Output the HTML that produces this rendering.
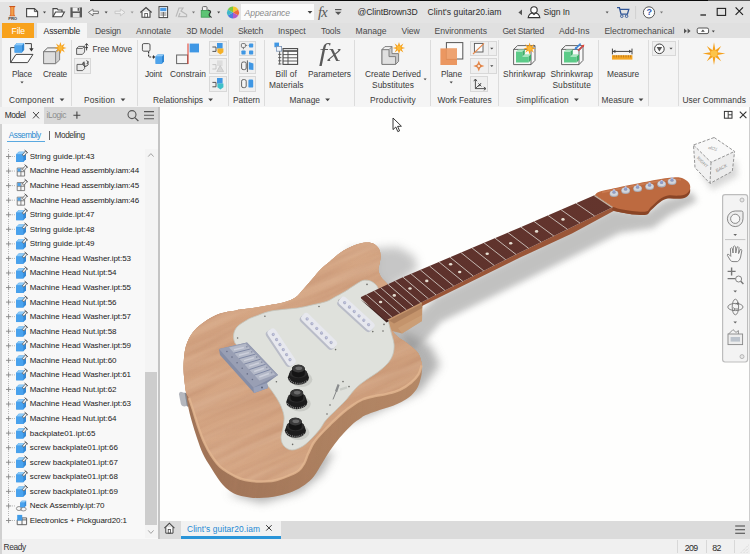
<!DOCTYPE html>
<html><head><meta charset="utf-8"><title>Autodesk Inventor - Clint's guitar20.iam</title>
<style>
html,body{margin:0;padding:0;}
body{width:750px;height:554px;overflow:hidden;position:relative;background:#fff;font-family:"Liberation Sans",sans-serif;}
.a{position:absolute;}
.t{position:absolute;white-space:nowrap;line-height:10px;}
svg{position:absolute;overflow:visible;}
#titlebar{left:0;top:0;width:750px;height:23px;background:#e3e3e3;}
#tabrow{left:0;top:23px;width:750px;height:15px;background:#e0e0e0;}
#ribbon{left:0;top:38px;width:750px;height:68.5px;background:#f5f5f5;}
.sep{position:absolute;top:40px;height:65.5px;width:1px;background:#dcdcdc;}
.btn{position:absolute;background:#efefef;border:1px solid #d8d8d8;box-sizing:border-box;}
#panel{left:0;top:106.5px;width:160px;height:432.5px;background:#f8f8f8;}
#viewport{left:160px;top:106.5px;width:590px;height:414.5px;background:#fefefd;}
#doctabs{left:160px;top:521px;width:590px;height:18px;background:#dbdbdb;}
#status{left:0;top:539px;width:750px;height:15px;background:#f0f0f0;}
</style></head><body>
<div id="titlebar" class="a"></div>
<div class="a" style="left:0;top:0;width:90px;height:1.6px;background:#f0f0f0"></div>
<div class="a" style="left:89.6px;top:0;width:618px;height:1.3px;background:#0a0a0a"></div>
<div class="a" style="left:708px;top:0;width:42px;height:1px;background:#555"></div>
<div id="tabrow" class="a"></div>
<div class="a" style="left:2px;top:23px;width:32px;height:15px;background:#f8a21c"></div>
<div class="a" style="left:37px;top:23px;width:50px;height:15px;background:#f5f5f5"></div>
<div id="ribbon" class="a"></div>
<div class="a" style="left:0;top:38px;width:2px;height:68.5px;background:#e6e6e6"></div>
<div class="a" style="left:241px;top:4px;width:73px;height:16px;background:#fbfbfb"></div>
<svg style="left:0;top:0" width="750" height="40" viewBox="0 0 750 40">
<!-- Inventor logo -->
<path d="M9.2 6 H15.4 L14.4 7.8 V14.4 L15.4 16.2 H9.2 L10.2 14.4 V7.8 Z" fill="#e0702c"/>
<path d="M11.2 7 H13.4 V15.4 H11.2 Z" fill="#f2a04a"/>
<path d="M9.2 6 H15.4 L14.8 7 H9.8 Z" fill="#c9541c"/>
<text x="8.2" y="20.2" font-size="4.2" font-weight="bold" fill="#3a3a3a" font-family="Liberation Sans, sans-serif" letter-spacing="-0.1">PRO</text>
<!-- new -->
<path d="M26.6 8.6 H34.4 L37.6 11.6 V16.8 H26.6 Z" fill="#fdfdfd" stroke="#444" stroke-width="1.1"/>
<path d="M34.4 8.6 V11.6 H37.6" fill="none" stroke="#444" stroke-width="0.9"/>
<path d="M43 11.6 H46 L44.5 13.4 Z" fill="#444"/>
<!-- open -->
<path d="M53 16.8 V8.6 H57 L58.2 10 H62 V12" fill="#fdfdfd" stroke="#444" stroke-width="1.1"/>
<path d="M53 16.8 L55.6 12 H64.4 L61.8 16.8 Z" fill="#fdfdfd" stroke="#444" stroke-width="1.1"/>
<!-- save -->
<path d="M70.4 7.4 H82 V17.4 H70.4 Z" fill="#5a5a5a"/>
<rect x="72.6" y="7.4" width="7" height="4" fill="#f2f2f2"/>
<rect x="77.6" y="8" width="1.4" height="2.8" fill="#5a5a5a"/>
<rect x="72.8" y="13" width="6.8" height="4.4" fill="#e4e4e4"/>
<!-- undo -->
<path d="M88.4 12.4 L93 9 V11.2 H98.4 V13.6 H93 V15.8 Z" fill="#f4f4f4" stroke="#666" stroke-width="0.9"/>
<path d="M104.6 11.6 H107.6 L106.1 13.4 Z" fill="#444"/>
<!-- redo -->
<path d="M125 12.4 L120.4 9 V11.2 H115 V13.6 H120.4 V15.8 Z" fill="#efefef" stroke="#c4c4c4" stroke-width="0.9"/>
<path d="M130.6 11.6 H133.6 L132.1 13.4 Z" fill="#999"/>
<!-- home -->
<path d="M140.4 12.6 L146 7.6 L151.6 12.6" fill="none" stroke="#444" stroke-width="1.3"/>
<path d="M142 12 V17.2 H150 V12" fill="#fdfdfd" stroke="#444" stroke-width="1.1"/>
<rect x="144.8" y="13.4" width="2.6" height="3.8" fill="#fdfdfd" stroke="#444" stroke-width="0.8"/>
<!-- doc blue -->
<rect x="159" y="6.6" width="8.6" height="11" fill="#fdfdfd" stroke="#444" stroke-width="1"/>
<rect x="160.2" y="7.8" width="6.2" height="3.4" fill="#4a9be6"/>
<path d="M160.4 13 H166.4 M160.4 15 H166.4 M163.4 12 V17" stroke="#555" stroke-width="0.8"/>
<!-- grey icon -->
<path d="M176 16.6 L179 8 H183 L181 11 L186.6 14.6 V16.6 H178.6 L180 13" fill="none" stroke="#b9b9b9" stroke-width="1.2"/>
<path d="M192 11.6 H195 L193.5 13.4 Z" fill="#777"/>
<!-- green icon -->
<rect x="202.4" y="6.6" width="4.6" height="5" rx="1" fill="#f2f2f2" stroke="#666" stroke-width="1"/>
<rect x="201.2" y="10.4" width="8.6" height="6.8" fill="#5cc474" stroke="#3a9a52" stroke-width="0.8"/>
<path d="M208 10 Q212.4 11 209.6 13.6 Q208 15.6 211.6 17.4" fill="none" stroke="#333" stroke-width="1.1"/>
<path d="M217.2 11.6 H220.2 L218.7 13.4 Z" fill="#444"/>
<!-- colour wheel -->
<g transform="translate(233 12.4)">
<path d="M0 0 L0 -6 A6 6 0 0 1 5.2 -3 Z" fill="#f6c52c"/>
<path d="M0 0 L5.2 -3 A6 6 0 0 1 5.2 3 Z" fill="#ee6a3a"/>
<path d="M0 0 L5.2 3 A6 6 0 0 1 0 6 Z" fill="#b05ac8"/>
<path d="M0 0 L0 6 A6 6 0 0 1 -5.2 3 Z" fill="#4a7de0"/>
<path d="M0 0 L-5.2 3 A6 6 0 0 1 -5.2 -3 Z" fill="#3fb8c8"/>
<path d="M0 0 L-5.2 -3 A6 6 0 0 1 0 -6 Z" fill="#7ac943"/>
</g>
<!-- appearance dropdown -->
<path d="M307.6 11 H312.4 L310 13.8 Z" fill="#444"/>
<!-- customize -->
<path d="M335 9.6 H341.4" stroke="#555" stroke-width="1.2"/>
<path d="M335 11.8 H341.4 L338.2 15 Z" fill="#555"/>
<!-- left arrow -->
<path d="M522 9.6 V15.2 L518.4 12.4 Z" fill="#555"/>
<!-- user -->
<circle cx="534" cy="10" r="3.2" fill="#fdfdfd" stroke="#333" stroke-width="1.1"/>
<path d="M528.2 17.6 Q529 13.4 532.4 13 L534 14.4 L535.6 13 Q539 13.4 539.8 17.6 Z" fill="#fdfdfd" stroke="#333" stroke-width="1.1"/>
<path d="M605.6 11.6 H608.6 L607.1 13.4 Z" fill="#555"/>
<!-- cart -->
<path d="M617 7.6 H619.4 L621 14.2 H627.4 L628.8 9.4 H620" fill="none" stroke="#2f5597" stroke-width="1.3"/>
<circle cx="621.8" cy="16.2" r="1.3" fill="none" stroke="#2f5597" stroke-width="0.9"/>
<circle cx="626.6" cy="16.2" r="1.3" fill="none" stroke="#2f5597" stroke-width="0.9"/>
<path d="M635.6 6 V19" stroke="#d0d0d0" stroke-width="1"/>
<!-- help -->
<circle cx="649" cy="12.4" r="5.6" fill="#fdfdfd" stroke="#555" stroke-width="1"/>
<path d="M660 11.6 H663 L661.5 13.4 Z" fill="#777"/>
<!-- window buttons -->
<path d="M700.4 15 H706" stroke="#222" stroke-width="1.3"/>
<rect x="717.2" y="8.4" width="8.4" height="7" fill="none" stroke="#222" stroke-width="1.1"/>
<path d="M735.6 7.4 L743 14.8 M743 7.4 L735.6 14.8" stroke="#222" stroke-width="1.2"/>
<!-- tab row right icons -->
<path d="M684 28.6 L687 31 L684 33.4 Z M687.6 28.6 L690.6 31 L687.6 33.4 Z" fill="#555"/>
<rect x="697.2" y="28" width="11.4" height="5.6" rx="1.6" fill="#fdfdfd" stroke="#444" stroke-width="0.9"/>
<path d="M701 31.8 L702.9 29.6 L704.8 31.8 Z" fill="#444"/>
<path d="M711.8 30.6 H714.8 L713.3 32.6 Z" fill="#444"/>
</svg>
<span class="t" style="left:646.4px;top:7.4px;font-size:9px;font-weight:bold;color:#2f55b0;">?</span>
<span class="t" style="left:318px;top:4.6px;font-size:14.5px;font-family:'Liberation Serif',serif;font-style:italic;color:#555;letter-spacing:-0.8px;line-height:14px">fx</span>

<div class="sep" style="left:71px"></div><div class="sep" style="left:137px"></div><div class="sep" style="left:228px"></div><div class="sep" style="left:264px"></div><div class="sep" style="left:354px"></div><div class="sep" style="left:430px"></div><div class="sep" style="left:498px"></div><div class="sep" style="left:598px"></div><div class="sep" style="left:648px"></div><div class="sep" style="left:678px"></div>
<div class="btn" style="left:74.4px;top:58.4px;width:16.6px;height:15.4px"></div>
<div class="btn" style="left:209.4px;top:41px;width:17.2px;height:15.2px"></div>
<div class="btn" style="left:209.4px;top:58.4px;width:17.2px;height:15.4px"></div>
<div class="btn" style="left:209.4px;top:76px;width:17.2px;height:15.6px"></div>
<div class="btn" style="left:238.6px;top:41px;width:17.4px;height:15.2px"></div>
<div class="btn" style="left:238.6px;top:58.4px;width:17.4px;height:15.4px"></div>
<div class="btn" style="left:238.6px;top:76px;width:17.4px;height:15.6px"></div>
<div class="btn" style="left:470.4px;top:41px;width:26.2px;height:15.2px"></div><div class="a" style="left:487.6px;top:41px;width:1px;height:15.2px;background:#d8d8d8"></div>
<div class="btn" style="left:470.4px;top:58.4px;width:26.2px;height:15.4px"></div><div class="a" style="left:487.6px;top:58.4px;width:1px;height:15.4px;background:#d8d8d8"></div>
<div class="btn" style="left:470.4px;top:76px;width:17.6px;height:15.6px"></div>
<div class="btn" style="left:651.6px;top:41px;width:24.4px;height:15.2px"></div>
<svg style="left:0;top:0" width="750" height="110" viewBox="0 0 750 110">
<g id="arrows" fill="#444">
<path d="M20.4 81.6 H23.6 L22 83.4 Z"/>
<path d="M59.6 98.4 H64.4 L62 101.2 Z"/>
<path d="M120.6 98.4 H125.4 L123 101.2 Z"/>
<path d="M208.2 98.4 H213 L210.6 101.2 Z"/>
<path d="M325.2 98.4 H330 L327.6 101.2 Z"/>
<path d="M423.6 78.4 H426.6 L425.1 80.2 Z"/>
<path d="M449.6 81.6 H452.8 L451.2 83.4 Z"/>
<path d="M574 98.4 H578.8 L576.4 101.2 Z"/>
<path d="M638.6 98.4 H643.4 L641 101.2 Z"/>
<path d="M490.2 47.8 H493.4 L491.8 49.6 Z"/>
<path d="M490.2 65.2 H493.4 L491.8 67 Z"/>
<path d="M669.4 47.8 H672.6 L671 49.6 Z"/>
</g>
<!-- Place -->
<path d="M10.6 62.6 L16 54.4 H33 L27.6 62.6 Z" fill="#fbfbfb" stroke="#444" stroke-width="1"/>
<path d="M10.6 62.6 V47.6 H15" fill="none" stroke="#444" stroke-width="1"/>
<path d="M25 43.6 H31.4 V49" fill="none" stroke="#444" stroke-width="1"/>
<path d="M29.2 48.2 H33.6 L31.4 51.6 Z" fill="#333"/>
<path d="M14.6 45.6 L16.8 43 H24.2 V50 L22 52.6 H14.6 Z" fill="#2f86d2"/>
<path d="M14.6 45.6 H22 V52.6 H14.6 Z" fill="#4ea4ec"/>
<path d="M14.6 45.6 L16.8 43 H24.2 L22 45.6 Z" fill="#8ccafa"/>
<!-- Create -->
<path d="M43.6 51.6 L47.6 48 H59.6 V60 L55.6 63.6 H43.6 Z" fill="#cfcfcf" stroke="#7a7a7a" stroke-width="0.9"/>
<path d="M43.6 51.6 H55.6 V63.6 H43.6 Z" fill="#dedede" stroke="#7a7a7a" stroke-width="0.9"/>
<path d="M43.6 51.6 L47.6 48 H59.6 L55.6 51.6 Z" fill="#f0f0f0" stroke="#7a7a7a" stroke-width="0.9"/>
<g transform="translate(60.4 48)"><path d="M0 -6 L1.2 -2.2 L4.4 -4.4 L2.6 -1 L6.2 0 L2.6 1 L4.4 4.4 L1.2 2.2 L0 6 L-1.2 2.2 L-4.4 4.4 L-2.6 1 L-6.2 0 L-2.6 -1 L-4.4 -4.4 L-1.2 -2.2 Z" fill="#f7a21b"/><circle r="2.2" fill="#fbb93a"/></g>
<!-- free move -->
<path d="M76.6 48.4 H82.4 L84.6 46.4 V52 L82.4 54.4 H76.6 Z" fill="#e9e9e9" stroke="#555" stroke-width="0.9"/>
<path d="M76.6 48.4 L78.8 46.4 H84.6" fill="none" stroke="#555" stroke-width="0.9"/>
<path d="M86.6 43.8 V50.4 M85 45.4 L86.6 43.6 L88.2 45.4 M85.2 47.6 H88" stroke="#333" stroke-width="0.9" fill="none"/>
<!-- rotate -->
<path d="M77 64.4 H82.6 L84.6 62.6 V68.6 L82.6 70.6 H77 Z" fill="#e9e9e9" stroke="#555" stroke-width="0.9"/>
<path d="M84 61.6 A2.6 2.6 0 1 0 87.8 62.6" fill="none" stroke="#333" stroke-width="1"/>
<path d="M86.4 60.6 L88.6 62 L86.6 63.6" fill="none" stroke="#333" stroke-width="0.9"/>
<!-- joint -->
<rect x="142.4" y="43.6" width="7.6" height="7.6" rx="1.4" fill="#f1f1f1" stroke="#555" stroke-width="1"/>
<path d="M148.6 51.6 V57 H154" fill="none" stroke="#333" stroke-width="1.2" stroke-dasharray="2 1"/>
<path d="M153 55 L155.4 57 L153 59 Z" fill="#333"/>
<path d="M155.6 56.6 L157.6 54.6 H164 V61.6 L162 63.8 H155.6 Z" fill="#2f86d2"/>
<path d="M155.6 56.6 H162 V63.8 H155.6 Z" fill="#4ea4ec"/>
<path d="M155.6 56.6 L157.6 54.6 H164 L162 56.6 Z" fill="#8ccafa"/>
<!-- constrain -->
<rect x="176.6" y="55" width="11" height="8.6" fill="#f6f6f6" stroke="#666" stroke-width="1"/>
<path d="M188 43.6 V64" stroke="#e0483a" stroke-width="1.1"/>
<rect x="189.6" y="43.6" width="9.4" height="8.8" fill="#3f97e4"/>
<!-- small relationship icons -->
<g id="rel1" transform="translate(0 0)">
<path d="M212.4 47 H216 V51.4 H212.4" fill="none" stroke="#444" stroke-width="0.9"/>
<rect x="217" y="43" width="5.6" height="5.6" fill="#3f97e4"/>
<path d="M217.4 48.4 H223.4 V52.2 L220.4 54.4 L217.4 52.2 Z" fill="#f5b026"/>
</g>
<g opacity="0.45">
<path d="M212.4 64.6 H216 V69 H212.4" fill="none" stroke="#888" stroke-width="0.9"/>
<rect x="217" y="60.4" width="5.6" height="5.6" fill="#c8c8c8"/>
<path d="M220.2 65.6 L223.6 71.6 H216.8 Z" fill="#bdbdbd" stroke="#888" stroke-width="0.7"/>
</g>
<path d="M212.4 82.4 H216 V86.8 H212.4" fill="none" stroke="#444" stroke-width="0.9"/>
<rect x="217" y="78" width="5.6" height="5.6" fill="#3f97e4"/>
<path d="M217.4 83.4 H223.4 V87.2 L220.4 89.6 L217.4 87.2 Z" fill="#3fc0c8"/>
<!-- pattern icons -->
<rect x="241.4" y="43.6" width="4" height="3.8" rx="0.8" fill="#f4f4f4" stroke="#555" stroke-width="0.8"/>
<rect x="249" y="43.4" width="4.2" height="4.2" rx="0.8" fill="#3f97e4"/>
<rect x="241.4" y="50.4" width="4.2" height="4.2" rx="0.8" fill="#3f97e4"/>
<rect x="249" y="50.4" width="4.2" height="4.2" rx="0.8" fill="#3f97e4"/>
<path d="M246 45.4 H248.4 M243.4 48 V50" stroke="#555" stroke-width="0.8" stroke-dasharray="1 0.8"/>
<rect x="241.6" y="62" width="4.6" height="7.6" rx="1.6" fill="#f4f4f4" stroke="#555" stroke-width="0.9"/>
<path d="M247.4 60.4 V72" stroke="#555" stroke-width="0.9"/>
<path d="M248.8 62 L253.4 63.4 V70 L248.8 69.4 Z" fill="#3f97e4"/>
<rect x="241.6" y="79.6" width="4.6" height="8" rx="1.6" fill="#f4f4f4" stroke="#555" stroke-width="0.9"/>
<rect x="248.4" y="79.6" width="4.8" height="8" rx="1.2" fill="#3f97e4"/>
<!-- BOM -->
<rect x="274.4" y="42.6" width="4.6" height="4.6" fill="#3f97e4"/>
<rect x="276.4" y="46.4" width="5.2" height="4.8" fill="#f2f6fb" stroke="#7b93b5" stroke-width="0.8"/>
<path d="M279.6 51.4 V64.4 M278.2 54.4 H281.4 M278.2 57.6 H281.4 M278.2 60.8 H281.4 M278.2 64 H281.4" stroke="#555" stroke-width="0.9"/>
<rect x="283" y="48.6" width="14.6" height="15.8" fill="#fbfbfb" stroke="#4a4a4a" stroke-width="1.1"/>
<path d="M283 51 H297.6" stroke="#4a4a4a" stroke-width="1.6"/>
<path d="M283 54.6 H297.6 M283 57.8 H297.6 M283 61 H297.6 M288 51 V64.4" stroke="#4a4a4a" stroke-width="0.9"/>
<!-- Create derived -->
<path d="M382 49.6 L385 46.6 H392 V53.6 H398.6 V61.4 L395.6 64.4 H382 Z" fill="#c9c9c9" stroke="#777" stroke-width="0.9"/>
<path d="M382 49.6 H389 V56.6 H395.6 V64.4 H382 Z" fill="#e0e0e0" stroke="#777" stroke-width="0.9"/>
<path d="M382 49.6 L385 46.6 H392 L389 49.6 Z" fill="#f2f2f2" stroke="#777" stroke-width="0.8"/>
<g transform="translate(399 48)"><path d="M0 -6 L1.2 -2.2 L4.4 -4.4 L2.6 -1 L6.2 0 L2.6 1 L4.4 4.4 L1.2 2.2 L0 6 L-1.2 2.2 L-4.4 4.4 L-2.6 1 L-6.2 0 L-2.6 -1 L-4.4 -4.4 L-1.2 -2.2 Z" fill="#f7a21b"/><circle r="2.2" fill="#fbb93a"/></g>
<!-- Plane -->
<rect x="446.4" y="42.6" width="16.4" height="16.4" fill="#fbfbfb" stroke="#555" stroke-width="1"/>
<rect x="440.4" y="48.4" width="16.6" height="16.6" fill="#e98a4c" opacity="0.88"/>
<rect x="446.4" y="48.4" width="10.6" height="10.6" fill="#f0a878" opacity="0.7"/>
<!-- work small icons -->
<rect x="474.4" y="43.4" width="8.6" height="8.6" fill="#fbfbfb" stroke="#555" stroke-width="0.9"/>
<path d="M473 54 L484 43.4" stroke="#e98a4c" stroke-width="1.1"/>
<g transform="translate(478.8 66)"><path d="M0 -5.6 L1.6 -1.6 L5.6 0 L1.6 1.6 L0 5.6 L-1.6 1.6 L-5.6 0 L-1.6 -1.6 Z" fill="#e98a4c"/><circle r="1.8" fill="#fbe6d6" stroke="#c96a2c" stroke-width="0.7"/></g>
<path d="M475.4 79.4 V88.6 H485.6 M473.8 81.2 L475.4 79 L477 81.2 M483.8 87 L486 88.6 L483.8 90.2 M475.4 88.6 L480.4 83.6 M478.4 83.4 L481.4 86.4 M481 83.2 L478.6 86.6" fill="none" stroke="#444" stroke-width="0.9"/>
<!-- Shrinkwrap 1 -->
<g id="sw1">
<path d="M513.6 49.4 L517.6 45.6 H535 V60.4 L531 64.6 H513.6 Z" fill="#f8f8f8" stroke="#555" stroke-width="0.9"/>
<path d="M513.6 49.4 H531 V64.6 M531 49.4 L535 45.6" fill="none" stroke="#555" stroke-width="0.9"/>
<path d="M516 51.6 H522.4 V56.4 H528.6 V62.4 H516 Z" fill="#5ccb88"/>
<path d="M516 51.6 L518.4 49.4 H524.8 L522.4 51.6 Z M522.4 56.4 L524.8 54.2 H531 L528.6 56.4 Z" fill="#a6e6bd"/>
<path d="M528.6 56.4 L531 54.2 V60 L528.6 62.4 Z M522.4 51.6 L524.8 49.4 V54.2 L522.4 56.4 Z" fill="#3fae6a"/>
</g>
<g transform="translate(529.6 48.4)"><path d="M0 -6 L1.2 -2.2 L4.4 -4.4 L2.6 -1 L6.2 0 L2.6 1 L4.4 4.4 L1.2 2.2 L0 6 L-1.2 2.2 L-4.4 4.4 L-2.6 1 L-6.2 0 L-2.6 -1 L-4.4 -4.4 L-1.2 -2.2 Z" fill="#f7a21b"/><circle r="2.2" fill="#fbb93a"/></g>
<!-- Shrinkwrap 2 -->
<g transform="translate(48 0)">
<path d="M513.6 49.4 L517.6 45.6 H535 V60.4 L531 64.6 H513.6 Z" fill="#f8f8f8" stroke="#555" stroke-width="0.9"/>
<path d="M513.6 49.4 H531 V64.6 M531 49.4 L535 45.6" fill="none" stroke="#555" stroke-width="0.9"/>
<path d="M516 51.6 H522.4 V56.4 H528.6 V62.4 H516 Z" fill="#5ccb88"/>
<path d="M516 51.6 L518.4 49.4 H524.8 L522.4 51.6 Z M522.4 56.4 L524.8 54.2 H531 L528.6 56.4 Z" fill="#a6e6bd"/>
<path d="M528.6 56.4 L531 54.2 V60 L528.6 62.4 Z M522.4 51.6 L524.8 49.4 V54.2 L522.4 56.4 Z" fill="#3fae6a"/>
<path d="M527.6 48.6 L532.6 43.6 M530.2 50.8 L535.2 45.8" stroke-width="1.6" fill="none" stroke="#3f86d8"/>
<path d="M530.2 50.8 L535.2 45.8" stroke-width="1.6" fill="none" stroke="#e0483a"/>
<path d="M526.4 49.8 L527.2 46.8 L529.4 49 Z" fill="#3f86d8"/><path d="M536.4 44.6 L535.6 47.6 L533.4 45.4 Z" fill="#e0483a"/>
</g>
<!-- Measure -->
<path d="M612.4 48.6 V54.4 M632 48.6 V54.4 M612.4 51.4 H632" stroke="#444" stroke-width="1"/>
<path d="M612.6 51.4 L615.4 49.8 V53 Z M631.8 51.4 L629 49.8 V53 Z" fill="#444"/>
<rect x="612" y="55.2" width="20.4" height="4.4" fill="#f5a623"/>
<path d="M614 55.2 V57.4 M616.4 55.2 V57.4 M618.8 55.2 V57.4 M621.2 55.2 V57.4 M623.6 55.2 V57.4 M626 55.2 V57.4 M628.4 55.2 V57.4 M630.6 55.2 V57.4" stroke="#9a5a10" stroke-width="0.6"/>
<!-- circle-triangle -->
<circle cx="659.4" cy="48.8" r="4.8" fill="#fbfbfb" stroke="#444" stroke-width="1"/>
<path d="M656.6 47 H662.2 L659.4 51.6 Z" fill="#555"/>
<!-- user star -->
<g transform="translate(714 53.6)">
<path d="M0 -11.4 L1.4 -3.4 L7.2 -7.6 L3.4 -1.4 L11.4 0 L3.4 1.4 L7.2 7.6 L1.4 3.4 L0 11.4 L-1.4 3.4 L-7.2 7.6 L-3.4 1.4 L-11.4 0 L-3.4 -1.4 L-7.2 -7.6 L-1.4 -3.4 Z" fill="#f5a01a"/>
<circle r="3.4" fill="#fcc44a"/>
</g>
</svg>
<span class="t" style="left:319px;top:37.8px;font-size:25px;font-family:'Liberation Serif',serif;font-style:italic;color:#5a5a5a;letter-spacing:0.5px;line-height:30px;transform:scaleX(1.18);transform-origin:0 0">fx</span>

<div id="viewport" class="a"></div>
<svg style="left:0;top:0" width="750" height="554" viewBox="0 0 750 554">
<defs>
<filter id="sh1" x="-20%" y="-20%" width="140%" height="140%"><feGaussianBlur stdDeviation="5"/></filter>
<filter id="sh2" x="-20%" y="-40%" width="140%" height="180%"><feGaussianBlur stdDeviation="3.2"/></filter>
<filter id="soft" x="-5%" y="-5%" width="110%" height="110%"><feGaussianBlur stdDeviation="0.5"/></filter>
<filter id="grain" x="0" y="0" width="100%" height="100%"><feGaussianBlur stdDeviation="2.5"/></filter>
<linearGradient id="woodtop" gradientUnits="userSpaceOnUse" x1="190" y1="330" x2="400" y2="440">
<stop offset="0" stop-color="#d4a583"/><stop offset="0.45" stop-color="#d5a684"/><stop offset="1" stop-color="#ce9f7c"/></linearGradient>
<linearGradient id="woodside" gradientUnits="userSpaceOnUse" x1="200" y1="480" x2="420" y2="380">
<stop offset="0" stop-color="#9e7256"/><stop offset="0.5" stop-color="#ac8060"/><stop offset="1" stop-color="#b48866"/></linearGradient>
<linearGradient id="fb" gradientUnits="userSpaceOnUse" x1="360" y1="310" x2="610" y2="200">
<stop offset="0" stop-color="#5b312c"/><stop offset="1" stop-color="#64352d"/></linearGradient>
<filter id="wood" x="0" y="0" width="100%" height="100%" color-interpolation-filters="sRGB">
<feTurbulence type="fractalNoise" baseFrequency="0.009 0.13" numOctaves="3" seed="7" result="n"/>
<feColorMatrix type="matrix" values="0 0 0 0 0.73  0 0 0 0 0.52  0 0 0 0 0.40  1.6 0 0 0 -0.62"/>
</filter>
<filter id="wood2" x="0" y="0" width="100%" height="100%" color-interpolation-filters="sRGB">
<feTurbulence type="fractalNoise" baseFrequency="0.008 0.1" numOctaves="2" seed="21" result="n"/>
<feColorMatrix type="matrix" values="0 0 0 0 0.89  0 0 0 0 0.75  0 0 0 0 0.64  1.8 0 0 0 -0.7"/>
</filter>
<clipPath id="outclip"><path d="M186.0 392.0 C185.4 387.7 184.8 383.7 184.4 380.0 C184.0 376.3 183.7 373.7 183.6 370.0 C183.5 366.3 183.6 362.0 184.0 358.0 C184.4 354.0 184.8 349.8 186.0 346.0 C187.2 342.2 188.8 338.3 191.0 335.0 C193.2 331.7 195.8 328.8 199.0 326.0 C202.2 323.2 206.2 320.4 210.0 318.2 C213.8 316.0 217.7 314.3 222.0 313.0 C226.3 311.7 233.0 311.0 236.0 310.4 C239.0 309.8 236.9 309.8 240.0 309.4 C243.1 308.9 249.7 308.4 254.5 307.7 C259.3 307.0 264.2 306.1 269.0 305.3 C273.8 304.5 279.1 303.9 283.4 302.6 C287.7 301.4 291.6 300.1 295.0 297.8 C298.4 295.5 300.7 292.1 303.6 289.0 C306.5 285.9 309.4 282.3 312.3 279.0 C315.2 275.7 318.1 271.9 321.0 269.0 C323.9 266.1 326.4 264.4 329.6 261.7 C332.8 259.0 335.9 255.7 340.0 253.0 C344.1 250.3 349.7 247.3 354.0 245.6 C358.3 243.9 362.7 242.9 366.0 242.6 C369.3 242.3 371.8 242.9 374.0 244.0 C376.2 245.1 377.9 247.0 379.0 249.0 C380.1 251.0 380.5 253.5 380.6 256.0 C380.7 258.5 379.8 261.7 379.4 264.0 C379.0 266.3 378.1 267.8 378.4 270.0 C378.7 272.2 379.7 274.9 381.0 277.0 C382.3 279.1 384.2 280.2 386.0 282.4 C387.8 284.6 391.0 285.4 392.0 290.0 C393.0 294.6 392.3 305.0 392.0 310.0 C391.7 315.0 390.0 316.7 390.0 320.0 C390.0 323.3 390.7 327.2 392.0 330.0 C393.3 332.8 395.3 334.7 398.0 337.0 C400.7 339.3 404.7 341.3 408.0 344.0 C411.3 346.7 415.7 349.8 418.0 353.0 C420.3 356.2 421.0 360.0 421.6 363.0 C422.2 366.0 421.9 368.6 421.8 371.0 C421.7 373.4 421.6 374.9 420.9 377.6 C420.2 380.3 419.3 384.3 417.7 387.3 C416.1 390.3 413.9 393.1 411.2 395.5 C408.5 397.9 404.9 400.1 401.4 402.0 C397.9 403.9 394.1 405.3 390.0 406.8 C385.9 408.3 381.1 409.5 377.0 410.9 C372.9 412.3 368.4 413.8 365.7 415.0 C363.0 416.2 363.3 416.3 360.9 418.0 C358.5 419.7 354.7 422.1 351.2 425.4 C347.7 428.7 343.3 433.4 339.8 437.6 C336.3 441.8 333.0 446.3 330.0 450.6 C327.0 454.9 324.7 459.3 322.0 463.6 C319.3 467.9 316.7 473.1 313.8 476.6 C310.9 480.1 308.4 482.2 304.9 484.7 C301.4 487.2 296.9 489.7 292.7 491.5 C288.5 493.3 283.8 494.6 279.7 495.6 C275.6 496.6 271.9 497.2 268.0 497.6 C264.1 498.0 260.0 498.2 256.0 498.0 C252.0 497.8 247.7 497.2 244.0 496.4 C240.3 495.6 237.0 494.8 234.0 493.4 C231.0 492.0 228.5 490.2 226.0 488.0 C223.5 485.8 221.7 483.7 219.0 480.0 C216.3 476.3 212.7 470.3 210.0 466.0 C207.3 461.7 205.2 458.7 203.0 454.0 C200.8 449.3 198.8 443.3 197.0 438.0 C195.2 432.7 193.5 427.3 192.0 422.0 C190.5 416.7 189.0 411.0 188.0 406.0 C187.0 401.0 186.6 396.3 186.0 392.0 Z"/></clipPath>
<clipPath id="topclip"><path d="M186.0 392.0 C185.2 389.0 184.8 383.7 184.4 380.0 C184.0 376.3 183.7 373.7 183.6 370.0 C183.5 366.3 183.6 362.0 184.0 358.0 C184.4 354.0 184.8 349.8 186.0 346.0 C187.2 342.2 188.8 338.3 191.0 335.0 C193.2 331.7 195.8 328.8 199.0 326.0 C202.2 323.2 206.2 320.4 210.0 318.2 C213.8 316.0 217.7 314.3 222.0 313.0 C226.3 311.7 233.0 311.0 236.0 310.4 C239.0 309.8 236.9 309.8 240.0 309.4 C243.1 308.9 249.7 308.4 254.5 307.7 C259.3 307.0 264.2 306.1 269.0 305.3 C273.8 304.5 279.1 303.9 283.4 302.6 C287.7 301.4 291.6 300.1 295.0 297.8 C298.4 295.5 300.7 292.1 303.6 289.0 C306.5 285.9 309.4 282.3 312.3 279.0 C315.2 275.7 318.1 271.9 321.0 269.0 C323.9 266.1 326.4 264.4 329.6 261.7 C332.8 259.0 335.9 255.7 340.0 253.0 C344.1 250.3 349.7 247.3 354.0 245.6 C358.3 243.9 362.7 242.9 366.0 242.6 C369.3 242.3 371.8 242.9 374.0 244.0 C376.2 245.1 377.9 247.0 379.0 249.0 C380.1 251.0 380.5 253.5 380.6 256.0 C380.7 258.5 379.8 261.7 379.4 264.0 C379.0 266.3 378.1 267.8 378.4 270.0 C378.7 272.2 379.7 274.9 381.0 277.0 C382.3 279.1 384.2 280.2 386.0 282.4 C387.8 284.6 391.0 285.4 392.0 290.0 C393.0 294.6 392.3 305.0 392.0 310.0 C391.7 315.0 390.0 316.7 390.0 320.0 C390.0 323.3 390.7 327.2 392.0 330.0 C393.3 332.8 395.3 334.7 398.0 337.0 C400.7 339.3 404.7 341.3 408.0 344.0 C411.3 346.7 415.7 349.8 418.0 353.0 C420.3 356.2 421.0 360.9 421.6 363.0 C422.2 365.1 422.2 363.5 421.7 365.4 C421.2 367.3 420.2 371.5 418.5 374.4 C416.8 377.2 414.3 379.9 411.2 382.5 C408.1 385.1 403.9 387.9 399.8 389.8 C395.7 391.7 391.1 392.7 386.8 393.8 C382.5 394.9 377.9 395.4 373.8 396.3 C369.8 397.2 366.0 398.0 362.5 399.5 C359.0 401.0 355.9 403.0 352.7 405.2 C349.4 407.4 346.5 409.5 343.0 412.5 C339.5 415.5 335.2 419.6 331.7 423.0 C328.2 426.4 325.0 429.4 322.0 432.7 C319.0 435.9 316.1 439.0 313.8 442.5 C311.5 446.0 309.7 450.4 308.1 453.8 C306.5 457.2 306.0 460.2 304.4 463.0 C302.8 465.8 301.4 468.4 298.6 470.6 C295.9 472.8 291.6 474.4 287.9 476.0 C284.2 477.6 280.1 479.1 276.5 480.0 C272.9 480.9 270.1 481.2 266.0 481.4 C261.9 481.6 256.3 481.5 252.0 481.0 C247.7 480.5 243.7 479.8 240.0 478.5 C236.3 477.2 233.3 475.5 230.0 473.5 C226.7 471.5 223.2 469.7 220.0 466.6 C216.8 463.5 213.7 459.1 211.0 455.0 C208.3 450.9 206.2 446.8 204.0 442.0 C201.8 437.2 199.8 431.3 198.0 426.0 C196.2 420.7 194.5 414.7 193.0 410.0 C191.5 405.3 190.2 401.0 189.0 398.0 C187.8 395.0 186.8 395.0 186.0 392.0 Z"/></clipPath>
</defs>
<g filter="url(#sh1)" opacity="0.75">
<path d="M300 470 L330 430 L370 415 L420 392 L440 365 L430 345 L400 330 L398 300 L380 250 L350 250 L330 300 L260 400 Z" fill="#9a9a9a"/>
<path d="M228 494 L262 503 L300 492 L322 474 L334 452 L316 452 L300 470 Z" fill="#9a9a9a"/>
<path d="M378 248 L398 247 L414 256 L418 268 L404 280 L388 288 L376 274 Z" fill="#b4b4b4"/>
</g>
<g filter="url(#sh2)" opacity="0.52">
<path d="M400 330 L436 297 L520 255 L613 209 L646 213 L664 200 L692 192 L697 201 L670 215 L653 228 L620 233 L524 281 L441 322 L426 340 L410 352 Z" fill="#8a8a8a"/>
</g>
<path d="M179 394.6 Q178.6 392.2 180.8 391.8 L186.4 393.6 L189.4 405 L184.6 406.6 Q181.4 406.4 180.8 403.6 Z" fill="#b4b7be"/>
<path d="M184.6 392.6 L187.6 393.4 L190.4 405.6 L187 406.8 Z" fill="#868a92"/>
<path d="M186.0 392.0 C185.4 387.7 184.8 383.7 184.4 380.0 C184.0 376.3 183.7 373.7 183.6 370.0 C183.5 366.3 183.6 362.0 184.0 358.0 C184.4 354.0 184.8 349.8 186.0 346.0 C187.2 342.2 188.8 338.3 191.0 335.0 C193.2 331.7 195.8 328.8 199.0 326.0 C202.2 323.2 206.2 320.4 210.0 318.2 C213.8 316.0 217.7 314.3 222.0 313.0 C226.3 311.7 233.0 311.0 236.0 310.4 C239.0 309.8 236.9 309.8 240.0 309.4 C243.1 308.9 249.7 308.4 254.5 307.7 C259.3 307.0 264.2 306.1 269.0 305.3 C273.8 304.5 279.1 303.9 283.4 302.6 C287.7 301.4 291.6 300.1 295.0 297.8 C298.4 295.5 300.7 292.1 303.6 289.0 C306.5 285.9 309.4 282.3 312.3 279.0 C315.2 275.7 318.1 271.9 321.0 269.0 C323.9 266.1 326.4 264.4 329.6 261.7 C332.8 259.0 335.9 255.7 340.0 253.0 C344.1 250.3 349.7 247.3 354.0 245.6 C358.3 243.9 362.7 242.9 366.0 242.6 C369.3 242.3 371.8 242.9 374.0 244.0 C376.2 245.1 377.9 247.0 379.0 249.0 C380.1 251.0 380.5 253.5 380.6 256.0 C380.7 258.5 379.8 261.7 379.4 264.0 C379.0 266.3 378.1 267.8 378.4 270.0 C378.7 272.2 379.7 274.9 381.0 277.0 C382.3 279.1 384.2 280.2 386.0 282.4 C387.8 284.6 391.0 285.4 392.0 290.0 C393.0 294.6 392.3 305.0 392.0 310.0 C391.7 315.0 390.0 316.7 390.0 320.0 C390.0 323.3 390.7 327.2 392.0 330.0 C393.3 332.8 395.3 334.7 398.0 337.0 C400.7 339.3 404.7 341.3 408.0 344.0 C411.3 346.7 415.7 349.8 418.0 353.0 C420.3 356.2 421.0 360.0 421.6 363.0 C422.2 366.0 421.9 368.6 421.8 371.0 C421.7 373.4 421.6 374.9 420.9 377.6 C420.2 380.3 419.3 384.3 417.7 387.3 C416.1 390.3 413.9 393.1 411.2 395.5 C408.5 397.9 404.9 400.1 401.4 402.0 C397.9 403.9 394.1 405.3 390.0 406.8 C385.9 408.3 381.1 409.5 377.0 410.9 C372.9 412.3 368.4 413.8 365.7 415.0 C363.0 416.2 363.3 416.3 360.9 418.0 C358.5 419.7 354.7 422.1 351.2 425.4 C347.7 428.7 343.3 433.4 339.8 437.6 C336.3 441.8 333.0 446.3 330.0 450.6 C327.0 454.9 324.7 459.3 322.0 463.6 C319.3 467.9 316.7 473.1 313.8 476.6 C310.9 480.1 308.4 482.2 304.9 484.7 C301.4 487.2 296.9 489.7 292.7 491.5 C288.5 493.3 283.8 494.6 279.7 495.6 C275.6 496.6 271.9 497.2 268.0 497.6 C264.1 498.0 260.0 498.2 256.0 498.0 C252.0 497.8 247.7 497.2 244.0 496.4 C240.3 495.6 237.0 494.8 234.0 493.4 C231.0 492.0 228.5 490.2 226.0 488.0 C223.5 485.8 221.7 483.7 219.0 480.0 C216.3 476.3 212.7 470.3 210.0 466.0 C207.3 461.7 205.2 458.7 203.0 454.0 C200.8 449.3 198.8 443.3 197.0 438.0 C195.2 432.7 193.5 427.3 192.0 422.0 C190.5 416.7 189.0 411.0 188.0 406.0 C187.0 401.0 186.6 396.3 186.0 392.0 Z" fill="url(#woodside)"/>
<path d="M186.0 392.0 C185.2 389.0 184.8 383.7 184.4 380.0 C184.0 376.3 183.7 373.7 183.6 370.0 C183.5 366.3 183.6 362.0 184.0 358.0 C184.4 354.0 184.8 349.8 186.0 346.0 C187.2 342.2 188.8 338.3 191.0 335.0 C193.2 331.7 195.8 328.8 199.0 326.0 C202.2 323.2 206.2 320.4 210.0 318.2 C213.8 316.0 217.7 314.3 222.0 313.0 C226.3 311.7 233.0 311.0 236.0 310.4 C239.0 309.8 236.9 309.8 240.0 309.4 C243.1 308.9 249.7 308.4 254.5 307.7 C259.3 307.0 264.2 306.1 269.0 305.3 C273.8 304.5 279.1 303.9 283.4 302.6 C287.7 301.4 291.6 300.1 295.0 297.8 C298.4 295.5 300.7 292.1 303.6 289.0 C306.5 285.9 309.4 282.3 312.3 279.0 C315.2 275.7 318.1 271.9 321.0 269.0 C323.9 266.1 326.4 264.4 329.6 261.7 C332.8 259.0 335.9 255.7 340.0 253.0 C344.1 250.3 349.7 247.3 354.0 245.6 C358.3 243.9 362.7 242.9 366.0 242.6 C369.3 242.3 371.8 242.9 374.0 244.0 C376.2 245.1 377.9 247.0 379.0 249.0 C380.1 251.0 380.5 253.5 380.6 256.0 C380.7 258.5 379.8 261.7 379.4 264.0 C379.0 266.3 378.1 267.8 378.4 270.0 C378.7 272.2 379.7 274.9 381.0 277.0 C382.3 279.1 384.2 280.2 386.0 282.4 C387.8 284.6 391.0 285.4 392.0 290.0 C393.0 294.6 392.3 305.0 392.0 310.0 C391.7 315.0 390.0 316.7 390.0 320.0 C390.0 323.3 390.7 327.2 392.0 330.0 C393.3 332.8 395.3 334.7 398.0 337.0 C400.7 339.3 404.7 341.3 408.0 344.0 C411.3 346.7 415.7 349.8 418.0 353.0 C420.3 356.2 421.0 360.9 421.6 363.0 C422.2 365.1 422.2 363.5 421.7 365.4 C421.2 367.3 420.2 371.5 418.5 374.4 C416.8 377.2 414.3 379.9 411.2 382.5 C408.1 385.1 403.9 387.9 399.8 389.8 C395.7 391.7 391.1 392.7 386.8 393.8 C382.5 394.9 377.9 395.4 373.8 396.3 C369.8 397.2 366.0 398.0 362.5 399.5 C359.0 401.0 355.9 403.0 352.7 405.2 C349.4 407.4 346.5 409.5 343.0 412.5 C339.5 415.5 335.2 419.6 331.7 423.0 C328.2 426.4 325.0 429.4 322.0 432.7 C319.0 435.9 316.1 439.0 313.8 442.5 C311.5 446.0 309.7 450.4 308.1 453.8 C306.5 457.2 306.0 460.2 304.4 463.0 C302.8 465.8 301.4 468.4 298.6 470.6 C295.9 472.8 291.6 474.4 287.9 476.0 C284.2 477.6 280.1 479.1 276.5 480.0 C272.9 480.9 270.1 481.2 266.0 481.4 C261.9 481.6 256.3 481.5 252.0 481.0 C247.7 480.5 243.7 479.8 240.0 478.5 C236.3 477.2 233.3 475.5 230.0 473.5 C226.7 471.5 223.2 469.7 220.0 466.6 C216.8 463.5 213.7 459.1 211.0 455.0 C208.3 450.9 206.2 446.8 204.0 442.0 C201.8 437.2 199.8 431.3 198.0 426.0 C196.2 420.7 194.5 414.7 193.0 410.0 C191.5 405.3 190.2 401.0 189.0 398.0 C187.8 395.0 186.8 395.0 186.0 392.0 Z" fill="url(#woodtop)"/>
<g clip-path="url(#topclip)" filter="url(#grain)" opacity="0.55">
<path d="M235.8 318.6 l49.8 -20.9" stroke="#e2b790" stroke-width="3.8" stroke-linecap="round"/>
<path d="M189.3 398.9 l44.5 -18.7" stroke="#e2b790" stroke-width="8.0" stroke-linecap="round"/>
<path d="M232.7 396.6 l43.8 -18.4" stroke="#e2b790" stroke-width="3.9" stroke-linecap="round"/>
<path d="M241.3 469.7 l31.3 -13.1" stroke="#dfb28a" stroke-width="6.2" stroke-linecap="round"/>
<path d="M357.1 334.8 l45.5 -19.1" stroke="#dfb28a" stroke-width="6.1" stroke-linecap="round"/>
<path d="M203.6 409.1 l63.6 -26.7" stroke="#cc9870" stroke-width="5.5" stroke-linecap="round"/>
<path d="M238.2 350.4 l77.2 -32.4" stroke="#dfb28a" stroke-width="7.1" stroke-linecap="round"/>
<path d="M186.6 352.5 l65.2 -27.4" stroke="#cc9870" stroke-width="4.6" stroke-linecap="round"/>
<path d="M274.0 407.8 l51.6 -21.7" stroke="#dfb28a" stroke-width="3.8" stroke-linecap="round"/>
<path d="M240.8 443.5 l34.1 -14.3" stroke="#dfb28a" stroke-width="5.3" stroke-linecap="round"/>
<path d="M296.6 416.6 l65.0 -27.3" stroke="#cc9870" stroke-width="3.7" stroke-linecap="round"/>
<path d="M199.3 464.4 l61.8 -25.9" stroke="#cc9870" stroke-width="5.2" stroke-linecap="round"/>
<path d="M261.5 434.4 l46.0 -19.3" stroke="#dfb28a" stroke-width="5.8" stroke-linecap="round"/>
<path d="M206.7 311.1 l41.4 -17.4" stroke="#cc9870" stroke-width="6.8" stroke-linecap="round"/>
<path d="M211.3 468.2 l44.5 -18.7" stroke="#dfb28a" stroke-width="3.1" stroke-linecap="round"/>
<path d="M334.9 461.3 l77.7 -32.6" stroke="#dfb28a" stroke-width="6.7" stroke-linecap="round"/>
<path d="M188.9 352.0 l78.3 -32.9" stroke="#c9966e" stroke-width="6.9" stroke-linecap="round"/>
<path d="M370.2 456.5 l64.0 -26.9" stroke="#cc9870" stroke-width="3.4" stroke-linecap="round"/>
<path d="M377.2 352.6 l42.5 -17.9" stroke="#cc9870" stroke-width="6.0" stroke-linecap="round"/>
<path d="M256.2 301.7 l32.2 -13.5" stroke="#dfb28a" stroke-width="3.8" stroke-linecap="round"/>
<path d="M399.4 402.9 l52.0 -21.8" stroke="#cc9870" stroke-width="4.0" stroke-linecap="round"/>
<path d="M209.4 311.2 l66.9 -28.1" stroke="#cc9870" stroke-width="6.0" stroke-linecap="round"/>
<path d="M315.4 398.3 l59.1 -24.8" stroke="#e2b790" stroke-width="4.6" stroke-linecap="round"/>
<path d="M211.3 395.3 l68.7 -28.8" stroke="#cc9870" stroke-width="5.0" stroke-linecap="round"/>
<path d="M287.7 343.5 l50.5 -21.2" stroke="#c9966e" stroke-width="3.2" stroke-linecap="round"/>
<path d="M280.4 416.5 l51.4 -21.6" stroke="#cc9870" stroke-width="4.1" stroke-linecap="round"/>
</g>
<g clip-path="url(#outclip)"><rect x="100" y="250" width="420" height="330" transform="rotate(-80 300 400)" filter="url(#wood)" opacity="0.3"/></g>
<path d="M186.0 392.0 C185.2 389.0 184.8 383.7 184.4 380.0 C184.0 376.3 183.7 373.7 183.6 370.0 C183.5 366.3 183.6 362.0 184.0 358.0 C184.4 354.0 184.8 349.8 186.0 346.0 C187.2 342.2 188.8 338.3 191.0 335.0 C193.2 331.7 195.8 328.8 199.0 326.0 C202.2 323.2 206.2 320.4 210.0 318.2 C213.8 316.0 217.7 314.3 222.0 313.0 C226.3 311.7 233.0 311.0 236.0 310.4 C239.0 309.8 236.9 309.8 240.0 309.4 C243.1 308.9 249.7 308.4 254.5 307.7 C259.3 307.0 264.2 306.1 269.0 305.3 C273.8 304.5 279.1 303.9 283.4 302.6 C287.7 301.4 291.6 300.1 295.0 297.8 C298.4 295.5 300.7 292.1 303.6 289.0 C306.5 285.9 309.4 282.3 312.3 279.0 C315.2 275.7 318.1 271.9 321.0 269.0 C323.9 266.1 326.4 264.4 329.6 261.7 C332.8 259.0 335.9 255.7 340.0 253.0 C344.1 250.3 349.7 247.3 354.0 245.6 C358.3 243.9 362.7 242.9 366.0 242.6 C369.3 242.3 371.8 242.9 374.0 244.0 C376.2 245.1 377.9 247.0 379.0 249.0 C380.1 251.0 380.5 253.5 380.6 256.0 C380.7 258.5 379.8 261.7 379.4 264.0 C379.0 266.3 378.1 267.8 378.4 270.0 C378.7 272.2 379.7 274.9 381.0 277.0 C382.3 279.1 384.2 280.2 386.0 282.4 C387.8 284.6 391.0 285.4 392.0 290.0 C393.0 294.6 392.3 305.0 392.0 310.0 C391.7 315.0 390.0 316.7 390.0 320.0 C390.0 323.3 390.7 327.2 392.0 330.0 C393.3 332.8 395.3 334.7 398.0 337.0 C400.7 339.3 404.7 341.3 408.0 344.0 C411.3 346.7 415.7 349.8 418.0 353.0 C420.3 356.2 421.0 360.9 421.6 363.0 C422.2 365.1 422.2 363.5 421.7 365.4 C421.2 367.3 420.2 371.5 418.5 374.4 C416.8 377.2 414.3 379.9 411.2 382.5 C408.1 385.1 403.9 387.9 399.8 389.8 C395.7 391.7 391.1 392.7 386.8 393.8 C382.5 394.9 377.9 395.4 373.8 396.3 C369.8 397.2 366.0 398.0 362.5 399.5 C359.0 401.0 355.9 403.0 352.7 405.2 C349.4 407.4 346.5 409.5 343.0 412.5 C339.5 415.5 335.2 419.6 331.7 423.0 C328.2 426.4 325.0 429.4 322.0 432.7 C319.0 435.9 316.1 439.0 313.8 442.5 C311.5 446.0 309.7 450.4 308.1 453.8 C306.5 457.2 306.0 460.2 304.4 463.0 C302.8 465.8 301.4 468.4 298.6 470.6 C295.9 472.8 291.6 474.4 287.9 476.0 C284.2 477.6 280.1 479.1 276.5 480.0 C272.9 480.9 270.1 481.2 266.0 481.4 C261.9 481.6 256.3 481.5 252.0 481.0 C247.7 480.5 243.7 479.8 240.0 478.5 C236.3 477.2 233.3 475.5 230.0 473.5 C226.7 471.5 223.2 469.7 220.0 466.6 C216.8 463.5 213.7 459.1 211.0 455.0 C208.3 450.9 206.2 446.8 204.0 442.0 C201.8 437.2 199.8 431.3 198.0 426.0 C196.2 420.7 194.5 414.7 193.0 410.0 C191.5 405.3 190.2 401.0 189.0 398.0 C187.8 395.0 186.8 395.0 186.0 392.0 Z" fill="url(#woodtop)"/>
<g clip-path="url(#topclip)"><rect x="100" y="250" width="420" height="330" transform="rotate(-24 300 400)" filter="url(#wood)" opacity="0.5"/><rect x="100" y="250" width="420" height="330" transform="rotate(-24 300 400)" filter="url(#wood2)" opacity="0.4"/></g>
<path d="M421.7 365.4 C421.2 366.9 420.2 371.5 418.5 374.4 C416.8 377.2 414.3 379.9 411.2 382.5 C408.1 385.1 403.9 387.9 399.8 389.8 C395.7 391.7 391.1 392.7 386.8 393.8 C382.5 394.9 377.9 395.4 373.8 396.3 C369.8 397.2 366.0 398.0 362.5 399.5 C359.0 401.0 355.9 403.0 352.7 405.2 C349.4 407.4 346.5 409.5 343.0 412.5 C339.5 415.5 335.2 419.6 331.7 423.0 C328.2 426.4 325.0 429.4 322.0 432.7 C319.0 435.9 316.1 439.0 313.8 442.5 C311.5 446.0 309.7 450.4 308.1 453.8 C306.5 457.2 306.0 460.2 304.4 463.0 C302.8 465.8 301.4 468.4 298.6 470.6 C295.9 472.8 291.6 474.4 287.9 476.0 C284.2 477.6 280.1 479.1 276.5 480.0 C272.9 480.9 270.1 481.2 266.0 481.4 C261.9 481.6 256.3 481.5 252.0 481.0 C247.7 480.5 243.7 479.8 240.0 478.5 C236.3 477.2 233.3 475.5 230.0 473.5 C226.7 471.5 223.2 469.7 220.0 466.6 C216.8 463.5 213.7 459.1 211.0 455.0 C208.3 450.9 206.2 446.8 204.0 442.0 C201.8 437.2 199.8 431.3 198.0 426.0 C196.2 420.7 194.5 414.7 193.0 410.0 C191.5 405.3 189.7 400.0 189.0 398.0" fill="none" stroke="#e4b892" stroke-width="2.4" opacity="0.8" filter="url(#soft)"/>
<path d="M386 316 L422.5 300 L422 321 L402 333.6 L392 331 Z" fill="#c4946c"/>
<path d="M389 320.6 L422.4 303.6 L422.2 308 L394 323.6 Z" fill="#a97a58" opacity="0.85"/>
<path d="M402 333.6 L422 321 L422 315 L398 328 Z" fill="#cfa27a" opacity="0.7"/>
<path d="M247.0 320.0 C249.9 318.3 250.8 318.0 254.5 316.6 C258.2 315.2 264.2 312.7 269.0 311.5 C273.8 310.3 278.6 310.0 283.4 309.4 C288.2 308.8 293.0 308.7 297.8 308.0 C302.6 307.3 307.2 306.1 312.0 305.0 C316.8 303.9 322.9 302.7 326.7 301.4 C330.5 300.1 332.0 298.6 335.0 297.0 C338.0 295.4 340.5 294.2 344.5 291.8 C348.5 289.4 355.6 284.3 359.0 282.4 C362.4 280.5 362.8 280.4 364.7 280.2 C366.6 280.0 368.8 280.4 370.5 281.0 C372.2 281.6 373.6 282.6 374.8 283.8 C376.1 285.0 376.8 285.3 378.0 288.0 C379.2 290.7 380.7 296.0 382.0 300.0 C383.3 304.0 385.0 308.7 386.0 312.0 C387.0 315.3 387.2 316.7 388.0 320.0 C388.8 323.3 390.0 328.0 391.0 332.0 C392.0 336.0 393.7 340.3 394.0 344.0 C394.3 347.7 394.0 350.8 393.0 354.0 C392.0 357.2 390.5 360.0 388.0 363.0 C385.5 366.0 381.7 369.2 378.0 372.0 C374.3 374.8 369.7 377.3 366.0 380.0 C362.3 382.7 359.3 384.7 356.0 388.0 C352.7 391.3 349.3 396.3 346.0 400.0 C342.7 403.7 339.3 406.7 336.0 410.0 C332.7 413.3 328.7 416.8 326.0 420.0 C323.3 423.2 322.3 426.0 320.0 429.0 C317.7 432.0 314.8 435.2 312.0 438.0 C309.2 440.8 306.3 444.0 303.0 446.0 C299.7 448.0 295.2 450.0 292.0 450.0 C288.8 450.0 285.8 448.0 284.0 446.0 C282.2 444.0 281.2 441.0 281.0 438.0 C280.8 435.0 282.5 431.7 283.0 428.0 C283.5 424.3 284.5 420.0 284.0 416.0 C283.5 412.0 281.7 407.7 280.0 404.0 C278.3 400.3 276.0 397.0 274.0 394.0 C272.0 391.0 270.7 389.3 268.0 386.0 C265.3 382.7 261.3 378.3 258.0 374.0 C254.7 369.7 251.0 364.3 248.0 360.0 C245.0 355.7 242.2 350.8 240.0 348.0 C237.8 345.2 236.1 345.2 235.0 343.0 C233.9 340.8 233.3 337.7 233.6 335.0 C233.9 332.3 234.8 329.5 237.0 327.0 C239.2 324.5 244.1 321.7 247.0 320.0 Z" fill="#dfe1dc"/>
<path d="M247.0 320.0 C249.9 318.3 250.8 318.0 254.5 316.6 C258.2 315.2 264.2 312.7 269.0 311.5 C273.8 310.3 278.6 310.0 283.4 309.4 C288.2 308.8 293.0 308.7 297.8 308.0 C302.6 307.3 307.2 306.1 312.0 305.0 C316.8 303.9 322.9 302.7 326.7 301.4 C330.5 300.1 332.0 298.6 335.0 297.0 C338.0 295.4 340.5 294.2 344.5 291.8 C348.5 289.4 355.6 284.3 359.0 282.4 C362.4 280.5 362.8 280.4 364.7 280.2 C366.6 280.0 368.8 280.4 370.5 281.0 C372.2 281.6 373.6 282.6 374.8 283.8 C376.1 285.0 376.8 285.3 378.0 288.0 C379.2 290.7 380.7 296.0 382.0 300.0 C383.3 304.0 385.0 308.7 386.0 312.0 C387.0 315.3 387.2 316.7 388.0 320.0 C388.8 323.3 390.0 328.0 391.0 332.0 C392.0 336.0 393.7 340.3 394.0 344.0 C394.3 347.7 394.0 350.8 393.0 354.0 C392.0 357.2 390.5 360.0 388.0 363.0 C385.5 366.0 381.7 369.2 378.0 372.0 C374.3 374.8 369.7 377.3 366.0 380.0 C362.3 382.7 359.3 384.7 356.0 388.0 C352.7 391.3 349.3 396.3 346.0 400.0 C342.7 403.7 339.3 406.7 336.0 410.0 C332.7 413.3 328.7 416.8 326.0 420.0 C323.3 423.2 322.3 426.0 320.0 429.0 C317.7 432.0 314.8 435.2 312.0 438.0 C309.2 440.8 306.3 444.0 303.0 446.0 C299.7 448.0 295.2 450.0 292.0 450.0 C288.8 450.0 285.8 448.0 284.0 446.0 C282.2 444.0 281.2 441.0 281.0 438.0 C280.8 435.0 282.5 431.7 283.0 428.0 C283.5 424.3 284.5 420.0 284.0 416.0 C283.5 412.0 281.7 407.7 280.0 404.0 C278.3 400.3 276.0 397.0 274.0 394.0 C272.0 391.0 270.7 389.3 268.0 386.0 C265.3 382.7 261.3 378.3 258.0 374.0 C254.7 369.7 251.0 364.3 248.0 360.0 C245.0 355.7 242.2 350.8 240.0 348.0 C237.8 345.2 236.1 345.2 235.0 343.0 C233.9 340.8 233.3 337.7 233.6 335.0 C233.9 332.3 234.8 329.5 237.0 327.0 C239.2 324.5 244.1 321.7 247.0 320.0 Z" fill="none" stroke="#c3c6bf" stroke-width="0.8"/>
<circle cx="264.9" cy="316.2" r="0.8" fill="#6a6a66"/>
<circle cx="319.0" cy="306.5" r="0.8" fill="#6a6a66"/>
<circle cx="367.0" cy="284.4" r="0.8" fill="#6a6a66"/>
<circle cx="237.6" cy="338.0" r="0.8" fill="#6a6a66"/>
<circle cx="384.0" cy="324.4" r="0.8" fill="#6a6a66"/>
<circle cx="372.8" cy="331.6" r="0.8" fill="#6a6a66"/>
<circle cx="335.6" cy="349.6" r="0.8" fill="#6a6a66"/>
<circle cx="339.3" cy="300.4" r="0.8" fill="#6a6a66"/>
<circle cx="302.0" cy="316.7" r="0.8" fill="#6a6a66"/>
<circle cx="343.0" cy="381.6" r="0.8" fill="#6a6a66"/>
<circle cx="349.0" cy="386.6" r="0.8" fill="#6a6a66"/>
<circle cx="330.0" cy="405.0" r="0.8" fill="#6a6a66"/>
<circle cx="327.0" cy="414.0" r="0.8" fill="#6a6a66"/>
<circle cx="383.0" cy="331.0" r="0.8" fill="#6a6a66"/>
<circle cx="292.6" cy="444.4" r="0.8" fill="#6a6a66"/>
<circle cx="276.4" cy="381.8" r="0.8" fill="#6a6a66"/>
<g transform="translate(272.4 333.8) rotate(56.4)"><rect x="-4.9" y="-3.5" width="42.1" height="9.8" rx="3.6" fill="#b9bcc8"/><rect x="-4.9" y="-4.9" width="42.1" height="9.2" rx="3.6" fill="#e7e8ee"/><circle cx="1.0" cy="-0.3" r="1.6" fill="#abaec6"/><circle cx="1.0" cy="-0.7" r="0.8" fill="#c4c8e2"/><circle cx="7.1" cy="-0.3" r="1.6" fill="#abaec6"/><circle cx="7.1" cy="-0.7" r="0.8" fill="#c4c8e2"/><circle cx="13.1" cy="-0.3" r="1.6" fill="#abaec6"/><circle cx="13.1" cy="-0.7" r="0.8" fill="#c4c8e2"/><circle cx="19.2" cy="-0.3" r="1.6" fill="#abaec6"/><circle cx="19.2" cy="-0.7" r="0.8" fill="#c4c8e2"/><circle cx="25.2" cy="-0.3" r="1.6" fill="#abaec6"/><circle cx="25.2" cy="-0.7" r="0.8" fill="#c4c8e2"/><circle cx="31.3" cy="-0.3" r="1.6" fill="#abaec6"/><circle cx="31.3" cy="-0.7" r="0.8" fill="#c4c8e2"/></g>
<g transform="translate(306.2 318.4) rotate(44.5)"><rect x="-4.9" y="-3.5" width="45.4" height="9.8" rx="3.6" fill="#b9bcc8"/><rect x="-4.9" y="-4.9" width="45.4" height="9.2" rx="3.6" fill="#e7e8ee"/><circle cx="1.0" cy="-0.3" r="1.6" fill="#abaec6"/><circle cx="1.0" cy="-0.7" r="0.8" fill="#c4c8e2"/><circle cx="7.7" cy="-0.3" r="1.6" fill="#abaec6"/><circle cx="7.7" cy="-0.7" r="0.8" fill="#c4c8e2"/><circle cx="14.5" cy="-0.3" r="1.6" fill="#abaec6"/><circle cx="14.5" cy="-0.7" r="0.8" fill="#c4c8e2"/><circle cx="21.2" cy="-0.3" r="1.6" fill="#abaec6"/><circle cx="21.2" cy="-0.7" r="0.8" fill="#c4c8e2"/><circle cx="27.9" cy="-0.3" r="1.6" fill="#abaec6"/><circle cx="27.9" cy="-0.7" r="0.8" fill="#c4c8e2"/><circle cx="34.6" cy="-0.3" r="1.6" fill="#abaec6"/><circle cx="34.6" cy="-0.7" r="0.8" fill="#c4c8e2"/></g>
<g transform="translate(343.7 302.2) rotate(42.5)"><rect x="-4.9" y="-3.5" width="44.3" height="9.8" rx="3.6" fill="#b9bcc8"/><rect x="-4.9" y="-4.9" width="44.3" height="9.2" rx="3.6" fill="#e7e8ee"/><circle cx="1.0" cy="-0.3" r="1.6" fill="#abaec6"/><circle cx="1.0" cy="-0.7" r="0.8" fill="#c4c8e2"/><circle cx="7.5" cy="-0.3" r="1.6" fill="#abaec6"/><circle cx="7.5" cy="-0.7" r="0.8" fill="#c4c8e2"/><circle cx="14.0" cy="-0.3" r="1.6" fill="#abaec6"/><circle cx="14.0" cy="-0.7" r="0.8" fill="#c4c8e2"/><circle cx="20.5" cy="-0.3" r="1.6" fill="#abaec6"/><circle cx="20.5" cy="-0.7" r="0.8" fill="#c4c8e2"/><circle cx="27.0" cy="-0.3" r="1.6" fill="#abaec6"/><circle cx="27.0" cy="-0.7" r="0.8" fill="#c4c8e2"/><circle cx="33.5" cy="-0.3" r="1.6" fill="#abaec6"/><circle cx="33.5" cy="-0.7" r="0.8" fill="#c4c8e2"/></g>
<path d="M219 349 L247 342.4 L278 375 L267 383 L268 388 L254 393 L220 355 Z" fill="#858da6"/>
<path d="M219 349 L247 342.4 L278 375 L253.4 387.6 Z" fill="#999fb4"/>
<path d="M229 347.6 L245.6 343.8 L275.4 374.6 L259.4 380.6 Z" fill="#b4b9c8"/>
<path d="M234.1 353.1 L250.6 348.9" stroke="#7f88a4" stroke-width="1"/>
<path d="M239.1 358.6 L255.5 354.1" stroke="#7f88a4" stroke-width="1"/>
<path d="M244.2 364.1 L260.5 359.2" stroke="#7f88a4" stroke-width="1"/>
<path d="M249.3 369.6 L265.5 364.3" stroke="#7f88a4" stroke-width="1"/>
<path d="M254.3 375.1 L270.4 369.5" stroke="#7f88a4" stroke-width="1"/>
<path d="M234.0 349.8 L243.9 347.4" stroke="#cdd0dc" stroke-width="1.5"/>
<circle cx="226.9" cy="351.5" r="0.8" fill="#6a7088"/>
<circle cx="246.8" cy="346.7" r="0.9" fill="#8d93a8"/>
<path d="M239.1 355.2 L248.9 352.6" stroke="#cdd0dc" stroke-width="1.5"/>
<circle cx="232.0" cy="357.1" r="0.8" fill="#6a7088"/>
<circle cx="251.7" cy="351.8" r="0.9" fill="#8d93a8"/>
<path d="M244.1 360.6 L253.9 357.8" stroke="#cdd0dc" stroke-width="1.5"/>
<circle cx="237.1" cy="362.7" r="0.8" fill="#6a7088"/>
<circle cx="256.7" cy="357.0" r="0.9" fill="#8d93a8"/>
<path d="M249.2 366.1 L258.9 363.0" stroke="#cdd0dc" stroke-width="1.5"/>
<circle cx="242.2" cy="368.3" r="0.8" fill="#6a7088"/>
<circle cx="261.7" cy="362.2" r="0.9" fill="#8d93a8"/>
<path d="M254.2 371.5 L263.9 368.3" stroke="#cdd0dc" stroke-width="1.5"/>
<circle cx="247.3" cy="373.9" r="0.8" fill="#6a7088"/>
<circle cx="266.7" cy="367.3" r="0.9" fill="#8d93a8"/>
<path d="M259.3 377.0 L268.9 373.5" stroke="#cdd0dc" stroke-width="1.5"/>
<circle cx="252.4" cy="379.5" r="0.8" fill="#6a7088"/>
<circle cx="271.6" cy="372.5" r="0.9" fill="#8d93a8"/>
<path d="M253.4 387.6 L267 383 L268 388 L254 393 Z" fill="#9aa2ba"/>
<circle cx="262" cy="387.6" r="1" fill="#5d647c"/>
<ellipse cx="301.4" cy="379.4" rx="11" ry="7.6" fill="#b9bbb6" opacity="0.55" filter="url(#soft)"/>
<path d="M287.8 377.6 a10.6 7.2 0 0 0 21.2 0 l-1.6 -4.4 h-18 Z" fill="#1c1c1c"/>
<ellipse cx="298.4" cy="373.2" rx="9" ry="5" fill="#2c2c2c"/>
<path d="M292.0 373.6 v-5 a6.4 3.8 0 0 1 12.8 0 v5 a6.4 3.8 0 0 1 -12.8 0 Z" fill="#141414"/>
<ellipse cx="298.4" cy="368.6" rx="6.4" ry="3.8" fill="#3a3a3a"/>
<ellipse cx="298.8" cy="368.2" rx="3.4" ry="1.8" fill="#777" opacity="0.8"/>
<path d="M289.0 378.6 a10 6.6 0 0 0 18.4 1.6" fill="none" stroke="#b0b0b0" stroke-width="1.6" stroke-dasharray="0.8 1.1" opacity="0.75"/>
<ellipse cx="299.8" cy="403.8" rx="11" ry="7.6" fill="#b9bbb6" opacity="0.55" filter="url(#soft)"/>
<path d="M286.2 402.0 a10.6 7.2 0 0 0 21.2 0 l-1.6 -4.4 h-18 Z" fill="#1c1c1c"/>
<ellipse cx="296.8" cy="397.6" rx="9" ry="5" fill="#2c2c2c"/>
<path d="M290.4 398.0 v-5 a6.4 3.8 0 0 1 12.8 0 v5 a6.4 3.8 0 0 1 -12.8 0 Z" fill="#141414"/>
<ellipse cx="296.8" cy="393.0" rx="6.4" ry="3.8" fill="#3a3a3a"/>
<ellipse cx="297.2" cy="392.6" rx="3.4" ry="1.8" fill="#777" opacity="0.8"/>
<path d="M287.4 403.0 a10 6.6 0 0 0 18.4 1.6" fill="none" stroke="#b0b0b0" stroke-width="1.6" stroke-dasharray="0.8 1.1" opacity="0.75"/>
<ellipse cx="298.4" cy="432.4" rx="11" ry="7.6" fill="#b9bbb6" opacity="0.55" filter="url(#soft)"/>
<path d="M284.8 430.6 a10.6 7.2 0 0 0 21.2 0 l-1.6 -4.4 h-18 Z" fill="#1c1c1c"/>
<ellipse cx="295.4" cy="426.2" rx="9" ry="5" fill="#2c2c2c"/>
<path d="M289.0 426.6 v-5 a6.4 3.8 0 0 1 12.8 0 v5 a6.4 3.8 0 0 1 -12.8 0 Z" fill="#141414"/>
<ellipse cx="295.4" cy="421.6" rx="6.4" ry="3.8" fill="#3a3a3a"/>
<ellipse cx="295.8" cy="421.2" rx="3.4" ry="1.8" fill="#777" opacity="0.8"/>
<path d="M286.0 431.6 a10 6.6 0 0 0 18.4 1.6" fill="none" stroke="#b0b0b0" stroke-width="1.6" stroke-dasharray="0.8 1.1" opacity="0.75"/>
<path d="M335 391 L337.6 384 L339.6 385 L337.2 392 Z" fill="#8a8c8e"/>
<path d="M336.4 391 L333 399.4" stroke="#77797c" stroke-width="0.9"/>
<path d="M340 389.6 L347 387.4" stroke="#c4c7c2" stroke-width="2.4" opacity="0.8"/>
<path d="M422 302 L436.5 294.7 L520 252.5 L613 207 L632 211 L646 211.6 L646.6 214.6 L632 214.6 L613.6 211 L572 233.6 L520 257.6 L437 298.6 L422 306 Z" fill="#9a5638"/>
<path d="M360.5 299.4 L386.6 322.6 L389 321 L386 318 Z" fill="#3c1d1a"/>
<path d="M362 296.4 Q360 297.4 361.4 298.8 L384.4 319.4 Q386 320.8 387.6 319.6 L436.5 294.7 L520 252.5 L613 207 L595 195 L520 227.5 L400 278.5 Z" fill="url(#fb)"/>
<path d="M366.0 294.4 L391.9 317.1" stroke="#cfc6c0" stroke-width="0.9"/>
<path d="M374.0 290.7 L399.8 313.1" stroke="#cfc6c0" stroke-width="0.9"/>
<path d="M380.6 287.6 L406.3 309.8" stroke="#cfc6c0" stroke-width="0.9"/>
<path d="M387.8 284.2 L413.4 306.3" stroke="#cfc6c0" stroke-width="0.9"/>
<path d="M395.0 280.8 L420.6 302.7" stroke="#cfc6c0" stroke-width="0.9"/>
<path d="M403.0 277.2 L428.4 298.8" stroke="#cfc6c0" stroke-width="0.9"/>
<path d="M411.0 273.8 L436.0 294.9" stroke="#cfc6c0" stroke-width="0.9"/>
<path d="M420.3 269.9 L444.9 290.4" stroke="#cfc6c0" stroke-width="0.9"/>
<path d="M429.5 266.0 L453.7 286.0" stroke="#cfc6c0" stroke-width="0.9"/>
<path d="M439.0 261.9 L462.8 281.4" stroke="#cfc6c0" stroke-width="0.9"/>
<path d="M450.0 257.2 L473.3 276.1" stroke="#cfc6c0" stroke-width="0.9"/>
<path d="M461.0 252.6 L483.7 270.8" stroke="#cfc6c0" stroke-width="0.9"/>
<path d="M472.0 247.9 L494.2 265.5" stroke="#cfc6c0" stroke-width="0.9"/>
<path d="M484.0 242.8 L505.7 259.7" stroke="#cfc6c0" stroke-width="0.9"/>
<path d="M495.0 238.1 L516.1 254.5" stroke="#cfc6c0" stroke-width="0.9"/>
<path d="M508.0 232.6 L528.6 248.3" stroke="#cfc6c0" stroke-width="0.9"/>
<path d="M521.0 227.1 L541.2 242.1" stroke="#cfc6c0" stroke-width="0.9"/>
<path d="M534.0 221.4 L553.8 236.0" stroke="#cfc6c0" stroke-width="0.9"/>
<path d="M548.0 215.4 L567.4 229.3" stroke="#cfc6c0" stroke-width="0.9"/>
<path d="M561.0 209.7 L580.0 223.1" stroke="#cfc6c0" stroke-width="0.9"/>
<path d="M576.0 203.2 L594.6 216.0" stroke="#cfc6c0" stroke-width="0.9"/>
<path d="M595 195 L613 207 L611.6 207.8 L593.6 195.7 Z" fill="#c4b4a4"/>
<ellipse cx="380.6" cy="302.0" rx="1.7" ry="1.3" fill="#e6dfd2"/>
<ellipse cx="394.3" cy="295.4" rx="1.7" ry="1.3" fill="#e6dfd2"/>
<ellipse cx="410.0" cy="288.5" rx="1.7" ry="1.3" fill="#e6dfd2"/>
<ellipse cx="426.8" cy="280.9" rx="1.7" ry="1.3" fill="#e6dfd2"/>
<ellipse cx="450.6" cy="264.3" rx="1.7" ry="1.3" fill="#e6dfd2"/>
<ellipse cx="459.7" cy="272.0" rx="1.7" ry="1.3" fill="#e6dfd2"/>
<ellipse cx="487.2" cy="253.8" rx="1.7" ry="1.3" fill="#e6dfd2"/>
<ellipse cx="510.7" cy="243.2" rx="1.7" ry="1.3" fill="#e6dfd2"/>
<ellipse cx="536.6" cy="231.4" rx="1.7" ry="1.3" fill="#e6dfd2"/>
<ellipse cx="563.0" cy="219.4" rx="1.7" ry="1.3" fill="#e6dfd2"/>
<path d="M682.0 181.2 C683.2 182.0 687.7 184.4 689.0 186.2 C690.3 188.0 690.5 190.4 690.0 192.2 C689.5 194.0 688.0 196.1 686.0 197.2 C684.0 198.3 681.0 198.6 678.0 198.8 C675.0 199.0 671.0 198.0 668.0 198.6 C665.0 199.2 662.8 200.3 660.0 202.2 C657.2 204.1 653.3 208.1 651.0 210.2 C648.7 212.3 649.2 214.1 646.0 214.8 C642.8 215.5 636.3 214.6 632.0 214.2 C627.7 213.8 623.2 212.9 620.0 212.2 C616.8 211.5 614.3 210.6 613.0 210.2 C611.7 209.8 612.2 210.0 612.0 210.0 L613 207 L690 189 Z" fill="#8a4526"/>
<path d="M595.0 195.0 C595.8 194.4 595.8 192.9 600.0 191.6 C604.2 190.3 611.7 188.8 620.0 187.0 C628.3 185.2 641.3 182.6 650.0 181.0 C658.7 179.4 666.7 178.1 672.0 177.6 C677.3 177.1 679.2 177.1 682.0 178.0 C684.8 178.9 687.7 181.2 689.0 183.0 C690.3 184.8 690.5 187.2 690.0 189.0 C689.5 190.8 688.0 192.9 686.0 194.0 C684.0 195.1 681.0 195.4 678.0 195.6 C675.0 195.8 671.0 194.8 668.0 195.4 C665.0 196.0 662.8 197.1 660.0 199.0 C657.2 200.9 653.3 204.9 651.0 207.0 C648.7 209.1 649.2 210.9 646.0 211.6 C642.8 212.3 636.3 211.4 632.0 211.0 C627.7 210.6 623.2 209.7 620.0 209.0 C616.8 208.3 614.2 207.3 613.0 207.0 Z" fill="#bd6a40"/>
<path d="M602 192.4 L650 182.6 L672 179.2 L681 179.8" fill="none" stroke="#cd8258" stroke-width="1.6" opacity="0.7"/>
<ellipse cx="614.0" cy="193.8" rx="4.4" ry="3.2" fill="#a9adb8"/>
<ellipse cx="614.0" cy="193.2" rx="3.8" ry="2.6" fill="#d2d5dc"/>
<ellipse cx="614.0" cy="192.4" rx="1.7" ry="1.3" fill="#8d97b8"/>
<rect x="612.9" y="189.8" width="2.2" height="3" rx="0.9" fill="#8f9dcc"/>
<ellipse cx="614.0" cy="190.0" rx="1.1" ry="0.7" fill="#c2cbe8"/>
<ellipse cx="625.6" cy="190.8" rx="4.4" ry="3.2" fill="#a9adb8"/>
<ellipse cx="625.6" cy="190.2" rx="3.8" ry="2.6" fill="#d2d5dc"/>
<ellipse cx="625.6" cy="189.4" rx="1.7" ry="1.3" fill="#8d97b8"/>
<rect x="624.5" y="186.8" width="2.2" height="3" rx="0.9" fill="#8f9dcc"/>
<ellipse cx="625.6" cy="187.0" rx="1.1" ry="0.7" fill="#c2cbe8"/>
<ellipse cx="637.6" cy="188.8" rx="4.4" ry="3.2" fill="#a9adb8"/>
<ellipse cx="637.6" cy="188.2" rx="3.8" ry="2.6" fill="#d2d5dc"/>
<ellipse cx="637.6" cy="187.4" rx="1.7" ry="1.3" fill="#8d97b8"/>
<rect x="636.5" y="184.8" width="2.2" height="3" rx="0.9" fill="#8f9dcc"/>
<ellipse cx="637.6" cy="185.0" rx="1.1" ry="0.7" fill="#c2cbe8"/>
<ellipse cx="649.6" cy="186.8" rx="4.4" ry="3.2" fill="#a9adb8"/>
<ellipse cx="649.6" cy="186.2" rx="3.8" ry="2.6" fill="#d2d5dc"/>
<ellipse cx="649.6" cy="185.4" rx="1.7" ry="1.3" fill="#8d97b8"/>
<rect x="648.5" y="182.8" width="2.2" height="3" rx="0.9" fill="#8f9dcc"/>
<ellipse cx="649.6" cy="183.0" rx="1.1" ry="0.7" fill="#c2cbe8"/>
<ellipse cx="661.6" cy="184.2" rx="4.4" ry="3.2" fill="#a9adb8"/>
<ellipse cx="661.6" cy="183.6" rx="3.8" ry="2.6" fill="#d2d5dc"/>
<ellipse cx="661.6" cy="182.8" rx="1.7" ry="1.3" fill="#8d97b8"/>
<rect x="660.5" y="180.2" width="2.2" height="3" rx="0.9" fill="#8f9dcc"/>
<ellipse cx="661.6" cy="180.4" rx="1.1" ry="0.7" fill="#c2cbe8"/>
<ellipse cx="672.0" cy="181.8" rx="4.4" ry="3.2" fill="#a9adb8"/>
<ellipse cx="672.0" cy="181.2" rx="3.8" ry="2.6" fill="#d2d5dc"/>
<ellipse cx="672.0" cy="180.4" rx="1.7" ry="1.3" fill="#8d97b8"/>
<rect x="670.9" y="177.8" width="2.2" height="3" rx="0.9" fill="#8f9dcc"/>
<ellipse cx="672.0" cy="178.0" rx="1.1" ry="0.7" fill="#c2cbe8"/>
</svg>
<div id="panel" class="a"></div>
<div class="a" style="left:0;top:106.5px;width:1.8px;height:432.5px;background:#d0d0d0"></div>
<div class="a" style="left:0;top:106.5px;width:158px;height:17.3px;background:#d8d8d8"></div>
<div class="a" style="left:0;top:106.5px;width:44px;height:17.3px;background:#f1f1f1"></div>
<div class="a" style="left:157.6px;top:106.5px;width:2.8px;height:432.5px;background:#c4c4c4"></div>
<svg style="left:0;top:0" width="160" height="130" viewBox="0 0 160 130">
<path d="M33 112 L39 118.4 M39 112 L33 118.4" stroke="#444" stroke-width="1" fill="none"/>
<path d="M73.4 115.2 H80.4 M76.9 111.6 V118.8" stroke="#444" stroke-width="1.1" fill="none"/>
<circle cx="132" cy="114.6" r="4" stroke="#555" stroke-width="1.1" fill="none"/>
<path d="M134.8 117.6 L138.4 121" stroke="#555" stroke-width="1.2"/>
<path d="M144 111.6 H154 M144 115.2 H154 M144 118.8 H154" stroke="#555" stroke-width="1.1"/>
</svg>
<div class="a" style="left:6.6px;top:140.6px;width:38.4px;height:1px;background:#5aa9e0"></div>
<div class="a" style="left:49px;top:130.8px;width:1px;height:9.6px;background:#666"></div>
<div class="a" style="left:145px;top:149px;width:12.6px;height:389px;background:#f4f4f4"></div>
<div class="a" style="left:144.8px;top:372px;width:12px;height:153px;background:#cdcdcd"></div>
<svg style="left:0;top:0" width="160" height="554" viewBox="0 0 160 554">
<path d="M148.2 156.6 L150.9 153.6 L153.6 156.6" stroke="#999" stroke-width="0.9" fill="none"/>
<path d="M148.2 530.4 L150.9 533.4 L153.6 530.4" stroke="#999" stroke-width="0.9" fill="none"/>
</svg>
<svg style="left:0;top:0" width="160" height="554" viewBox="0 0 160 554">
<path d="M8.5 149.0 V520.0" stroke="#b8b8b8" stroke-width="1" stroke-dasharray="1 1"/>
<g transform="translate(0 156.50)">
<rect x="5.2" y="-3.4" width="6.8" height="6.8" fill="#f8f8f8"/>
<path d="M6 0 H11.2 M8.6 -2.6 V2.6" stroke="#888" stroke-width="0.9"/>
<path d="M12 0 H15" stroke="#b8b8b8" stroke-width="1" stroke-dasharray="1 1"/>
<path d="M16.2 -2.2 L18.8 -4.8 H26 V2.8 L23.4 5.4 H16.2 Z" fill="#3489d6"/>
<path d="M16.2 -2.2 H23.4 V5.4 H16.2 Z" fill="#48a2ee"/>
<path d="M16.2 -2.2 L18.8 -4.8 H26 L23.4 -2.2 Z" fill="#8ccaf8"/>
<path d="M22.2 -1.6 L25.6 -5.6 L27.2 -4.2 L24 -0.4 Z" fill="#f4f4f4" stroke="#555" stroke-width="0.7"/>
<path d="M24.6 -6.4 L27.8 -3.6" stroke="#555" stroke-width="1"/>
</g>
<g transform="translate(0 171.06)">
<rect x="5.2" y="-3.4" width="6.8" height="6.8" fill="#f8f8f8"/>
<path d="M6 0 H11.2 M8.6 -2.6 V2.6" stroke="#888" stroke-width="0.9"/>
<path d="M12 0 H15" stroke="#b8b8b8" stroke-width="1" stroke-dasharray="1 1"/>
<path d="M17.2 -3 H24.6 V5 H17.2 Z" fill="#f6f6f6" stroke="#666" stroke-width="0.8"/>
<path d="M20.9 -3 V5 M17.2 0.6 H24.6" stroke="#666" stroke-width="0.8"/>
<rect x="17.6" y="-2.6" width="3" height="3" fill="#4da3ea"/>
<path d="M22.2 -1.6 L25.6 -5.6 L27.2 -4.2 L24 -0.4 Z" fill="#f4f4f4" stroke="#555" stroke-width="0.7"/>
<path d="M24.6 -6.4 L27.8 -3.6" stroke="#555" stroke-width="1"/>
</g>
<g transform="translate(0 185.62)">
<rect x="5.2" y="-3.4" width="6.8" height="6.8" fill="#f8f8f8"/>
<path d="M6 0 H11.2 M8.6 -2.6 V2.6" stroke="#888" stroke-width="0.9"/>
<path d="M12 0 H15" stroke="#b8b8b8" stroke-width="1" stroke-dasharray="1 1"/>
<path d="M17.2 -3 H24.6 V5 H17.2 Z" fill="#f6f6f6" stroke="#666" stroke-width="0.8"/>
<path d="M20.9 -3 V5 M17.2 0.6 H24.6" stroke="#666" stroke-width="0.8"/>
<rect x="17.6" y="-2.6" width="3" height="3" fill="#4da3ea"/>
<path d="M22.2 -1.6 L25.6 -5.6 L27.2 -4.2 L24 -0.4 Z" fill="#f4f4f4" stroke="#555" stroke-width="0.7"/>
<path d="M24.6 -6.4 L27.8 -3.6" stroke="#555" stroke-width="1"/>
</g>
<g transform="translate(0 200.18)">
<rect x="5.2" y="-3.4" width="6.8" height="6.8" fill="#f8f8f8"/>
<path d="M6 0 H11.2 M8.6 -2.6 V2.6" stroke="#888" stroke-width="0.9"/>
<path d="M12 0 H15" stroke="#b8b8b8" stroke-width="1" stroke-dasharray="1 1"/>
<path d="M17.2 -3 H24.6 V5 H17.2 Z" fill="#f6f6f6" stroke="#666" stroke-width="0.8"/>
<path d="M20.9 -3 V5 M17.2 0.6 H24.6" stroke="#666" stroke-width="0.8"/>
<rect x="17.6" y="-2.6" width="3" height="3" fill="#4da3ea"/>
<path d="M22.2 -1.6 L25.6 -5.6 L27.2 -4.2 L24 -0.4 Z" fill="#f4f4f4" stroke="#555" stroke-width="0.7"/>
<path d="M24.6 -6.4 L27.8 -3.6" stroke="#555" stroke-width="1"/>
</g>
<g transform="translate(0 214.74)">
<rect x="5.2" y="-3.4" width="6.8" height="6.8" fill="#f8f8f8"/>
<path d="M6 0 H11.2 M8.6 -2.6 V2.6" stroke="#888" stroke-width="0.9"/>
<path d="M12 0 H15" stroke="#b8b8b8" stroke-width="1" stroke-dasharray="1 1"/>
<path d="M16.2 -2.2 L18.8 -4.8 H26 V2.8 L23.4 5.4 H16.2 Z" fill="#3489d6"/>
<path d="M16.2 -2.2 H23.4 V5.4 H16.2 Z" fill="#48a2ee"/>
<path d="M16.2 -2.2 L18.8 -4.8 H26 L23.4 -2.2 Z" fill="#8ccaf8"/>
<path d="M22.2 -1.6 L25.6 -5.6 L27.2 -4.2 L24 -0.4 Z" fill="#f4f4f4" stroke="#555" stroke-width="0.7"/>
<path d="M24.6 -6.4 L27.8 -3.6" stroke="#555" stroke-width="1"/>
</g>
<g transform="translate(0 229.30)">
<rect x="5.2" y="-3.4" width="6.8" height="6.8" fill="#f8f8f8"/>
<path d="M6 0 H11.2 M8.6 -2.6 V2.6" stroke="#888" stroke-width="0.9"/>
<path d="M12 0 H15" stroke="#b8b8b8" stroke-width="1" stroke-dasharray="1 1"/>
<path d="M16.2 -2.2 L18.8 -4.8 H26 V2.8 L23.4 5.4 H16.2 Z" fill="#3489d6"/>
<path d="M16.2 -2.2 H23.4 V5.4 H16.2 Z" fill="#48a2ee"/>
<path d="M16.2 -2.2 L18.8 -4.8 H26 L23.4 -2.2 Z" fill="#8ccaf8"/>
<path d="M22.2 -1.6 L25.6 -5.6 L27.2 -4.2 L24 -0.4 Z" fill="#f4f4f4" stroke="#555" stroke-width="0.7"/>
<path d="M24.6 -6.4 L27.8 -3.6" stroke="#555" stroke-width="1"/>
</g>
<g transform="translate(0 243.86)">
<rect x="5.2" y="-3.4" width="6.8" height="6.8" fill="#f8f8f8"/>
<path d="M6 0 H11.2 M8.6 -2.6 V2.6" stroke="#888" stroke-width="0.9"/>
<path d="M12 0 H15" stroke="#b8b8b8" stroke-width="1" stroke-dasharray="1 1"/>
<path d="M16.2 -2.2 L18.8 -4.8 H26 V2.8 L23.4 5.4 H16.2 Z" fill="#3489d6"/>
<path d="M16.2 -2.2 H23.4 V5.4 H16.2 Z" fill="#48a2ee"/>
<path d="M16.2 -2.2 L18.8 -4.8 H26 L23.4 -2.2 Z" fill="#8ccaf8"/>
<path d="M22.2 -1.6 L25.6 -5.6 L27.2 -4.2 L24 -0.4 Z" fill="#f4f4f4" stroke="#555" stroke-width="0.7"/>
<path d="M24.6 -6.4 L27.8 -3.6" stroke="#555" stroke-width="1"/>
</g>
<g transform="translate(0 258.42)">
<rect x="5.2" y="-3.4" width="6.8" height="6.8" fill="#f8f8f8"/>
<path d="M6 0 H11.2 M8.6 -2.6 V2.6" stroke="#888" stroke-width="0.9"/>
<path d="M12 0 H15" stroke="#b8b8b8" stroke-width="1" stroke-dasharray="1 1"/>
<path d="M16.2 -2.2 L18.8 -4.8 H26 V2.8 L23.4 5.4 H16.2 Z" fill="#3489d6"/>
<path d="M16.2 -2.2 H23.4 V5.4 H16.2 Z" fill="#48a2ee"/>
<path d="M16.2 -2.2 L18.8 -4.8 H26 L23.4 -2.2 Z" fill="#8ccaf8"/>
<path d="M22.2 -1.6 L25.6 -5.6 L27.2 -4.2 L24 -0.4 Z" fill="#f4f4f4" stroke="#555" stroke-width="0.7"/>
<path d="M24.6 -6.4 L27.8 -3.6" stroke="#555" stroke-width="1"/>
</g>
<g transform="translate(0 272.98)">
<rect x="5.2" y="-3.4" width="6.8" height="6.8" fill="#f8f8f8"/>
<path d="M6 0 H11.2 M8.6 -2.6 V2.6" stroke="#888" stroke-width="0.9"/>
<path d="M12 0 H15" stroke="#b8b8b8" stroke-width="1" stroke-dasharray="1 1"/>
<path d="M16.2 -2.2 L18.8 -4.8 H26 V2.8 L23.4 5.4 H16.2 Z" fill="#3489d6"/>
<path d="M16.2 -2.2 H23.4 V5.4 H16.2 Z" fill="#48a2ee"/>
<path d="M16.2 -2.2 L18.8 -4.8 H26 L23.4 -2.2 Z" fill="#8ccaf8"/>
<path d="M22.2 -1.6 L25.6 -5.6 L27.2 -4.2 L24 -0.4 Z" fill="#f4f4f4" stroke="#555" stroke-width="0.7"/>
<path d="M24.6 -6.4 L27.8 -3.6" stroke="#555" stroke-width="1"/>
</g>
<g transform="translate(0 287.54)">
<rect x="5.2" y="-3.4" width="6.8" height="6.8" fill="#f8f8f8"/>
<path d="M6 0 H11.2 M8.6 -2.6 V2.6" stroke="#888" stroke-width="0.9"/>
<path d="M12 0 H15" stroke="#b8b8b8" stroke-width="1" stroke-dasharray="1 1"/>
<path d="M16.2 -2.2 L18.8 -4.8 H26 V2.8 L23.4 5.4 H16.2 Z" fill="#3489d6"/>
<path d="M16.2 -2.2 H23.4 V5.4 H16.2 Z" fill="#48a2ee"/>
<path d="M16.2 -2.2 L18.8 -4.8 H26 L23.4 -2.2 Z" fill="#8ccaf8"/>
<path d="M22.2 -1.6 L25.6 -5.6 L27.2 -4.2 L24 -0.4 Z" fill="#f4f4f4" stroke="#555" stroke-width="0.7"/>
<path d="M24.6 -6.4 L27.8 -3.6" stroke="#555" stroke-width="1"/>
</g>
<g transform="translate(0 302.10)">
<rect x="5.2" y="-3.4" width="6.8" height="6.8" fill="#f8f8f8"/>
<path d="M6 0 H11.2 M8.6 -2.6 V2.6" stroke="#888" stroke-width="0.9"/>
<path d="M12 0 H15" stroke="#b8b8b8" stroke-width="1" stroke-dasharray="1 1"/>
<path d="M16.2 -2.2 L18.8 -4.8 H26 V2.8 L23.4 5.4 H16.2 Z" fill="#3489d6"/>
<path d="M16.2 -2.2 H23.4 V5.4 H16.2 Z" fill="#48a2ee"/>
<path d="M16.2 -2.2 L18.8 -4.8 H26 L23.4 -2.2 Z" fill="#8ccaf8"/>
<path d="M22.2 -1.6 L25.6 -5.6 L27.2 -4.2 L24 -0.4 Z" fill="#f4f4f4" stroke="#555" stroke-width="0.7"/>
<path d="M24.6 -6.4 L27.8 -3.6" stroke="#555" stroke-width="1"/>
</g>
<g transform="translate(0 316.66)">
<rect x="5.2" y="-3.4" width="6.8" height="6.8" fill="#f8f8f8"/>
<path d="M6 0 H11.2 M8.6 -2.6 V2.6" stroke="#888" stroke-width="0.9"/>
<path d="M12 0 H15" stroke="#b8b8b8" stroke-width="1" stroke-dasharray="1 1"/>
<path d="M16.2 -2.2 L18.8 -4.8 H26 V2.8 L23.4 5.4 H16.2 Z" fill="#3489d6"/>
<path d="M16.2 -2.2 H23.4 V5.4 H16.2 Z" fill="#48a2ee"/>
<path d="M16.2 -2.2 L18.8 -4.8 H26 L23.4 -2.2 Z" fill="#8ccaf8"/>
<path d="M22.2 -1.6 L25.6 -5.6 L27.2 -4.2 L24 -0.4 Z" fill="#f4f4f4" stroke="#555" stroke-width="0.7"/>
<path d="M24.6 -6.4 L27.8 -3.6" stroke="#555" stroke-width="1"/>
</g>
<g transform="translate(0 331.22)">
<rect x="5.2" y="-3.4" width="6.8" height="6.8" fill="#f8f8f8"/>
<path d="M6 0 H11.2 M8.6 -2.6 V2.6" stroke="#888" stroke-width="0.9"/>
<path d="M12 0 H15" stroke="#b8b8b8" stroke-width="1" stroke-dasharray="1 1"/>
<path d="M16.2 -2.2 L18.8 -4.8 H26 V2.8 L23.4 5.4 H16.2 Z" fill="#3489d6"/>
<path d="M16.2 -2.2 H23.4 V5.4 H16.2 Z" fill="#48a2ee"/>
<path d="M16.2 -2.2 L18.8 -4.8 H26 L23.4 -2.2 Z" fill="#8ccaf8"/>
<path d="M22.2 -1.6 L25.6 -5.6 L27.2 -4.2 L24 -0.4 Z" fill="#f4f4f4" stroke="#555" stroke-width="0.7"/>
<path d="M24.6 -6.4 L27.8 -3.6" stroke="#555" stroke-width="1"/>
</g>
<g transform="translate(0 345.78)">
<rect x="5.2" y="-3.4" width="6.8" height="6.8" fill="#f8f8f8"/>
<path d="M6 0 H11.2 M8.6 -2.6 V2.6" stroke="#888" stroke-width="0.9"/>
<path d="M12 0 H15" stroke="#b8b8b8" stroke-width="1" stroke-dasharray="1 1"/>
<path d="M16.2 -2.2 L18.8 -4.8 H26 V2.8 L23.4 5.4 H16.2 Z" fill="#3489d6"/>
<path d="M16.2 -2.2 H23.4 V5.4 H16.2 Z" fill="#48a2ee"/>
<path d="M16.2 -2.2 L18.8 -4.8 H26 L23.4 -2.2 Z" fill="#8ccaf8"/>
<path d="M22.2 -1.6 L25.6 -5.6 L27.2 -4.2 L24 -0.4 Z" fill="#f4f4f4" stroke="#555" stroke-width="0.7"/>
<path d="M24.6 -6.4 L27.8 -3.6" stroke="#555" stroke-width="1"/>
</g>
<g transform="translate(0 360.34)">
<rect x="5.2" y="-3.4" width="6.8" height="6.8" fill="#f8f8f8"/>
<path d="M6 0 H11.2 M8.6 -2.6 V2.6" stroke="#888" stroke-width="0.9"/>
<path d="M12 0 H15" stroke="#b8b8b8" stroke-width="1" stroke-dasharray="1 1"/>
<path d="M16.2 -2.2 L18.8 -4.8 H26 V2.8 L23.4 5.4 H16.2 Z" fill="#3489d6"/>
<path d="M16.2 -2.2 H23.4 V5.4 H16.2 Z" fill="#48a2ee"/>
<path d="M16.2 -2.2 L18.8 -4.8 H26 L23.4 -2.2 Z" fill="#8ccaf8"/>
<path d="M22.2 -1.6 L25.6 -5.6 L27.2 -4.2 L24 -0.4 Z" fill="#f4f4f4" stroke="#555" stroke-width="0.7"/>
<path d="M24.6 -6.4 L27.8 -3.6" stroke="#555" stroke-width="1"/>
</g>
<g transform="translate(0 374.90)">
<rect x="5.2" y="-3.4" width="6.8" height="6.8" fill="#f8f8f8"/>
<path d="M6 0 H11.2 M8.6 -2.6 V2.6" stroke="#888" stroke-width="0.9"/>
<path d="M12 0 H15" stroke="#b8b8b8" stroke-width="1" stroke-dasharray="1 1"/>
<path d="M16.2 -2.2 L18.8 -4.8 H26 V2.8 L23.4 5.4 H16.2 Z" fill="#3489d6"/>
<path d="M16.2 -2.2 H23.4 V5.4 H16.2 Z" fill="#48a2ee"/>
<path d="M16.2 -2.2 L18.8 -4.8 H26 L23.4 -2.2 Z" fill="#8ccaf8"/>
<path d="M22.2 -1.6 L25.6 -5.6 L27.2 -4.2 L24 -0.4 Z" fill="#f4f4f4" stroke="#555" stroke-width="0.7"/>
<path d="M24.6 -6.4 L27.8 -3.6" stroke="#555" stroke-width="1"/>
</g>
<g transform="translate(0 389.46)">
<rect x="5.2" y="-3.4" width="6.8" height="6.8" fill="#f8f8f8"/>
<path d="M6 0 H11.2 M8.6 -2.6 V2.6" stroke="#888" stroke-width="0.9"/>
<path d="M12 0 H15" stroke="#b8b8b8" stroke-width="1" stroke-dasharray="1 1"/>
<path d="M16.2 -2.2 L18.8 -4.8 H26 V2.8 L23.4 5.4 H16.2 Z" fill="#3489d6"/>
<path d="M16.2 -2.2 H23.4 V5.4 H16.2 Z" fill="#48a2ee"/>
<path d="M16.2 -2.2 L18.8 -4.8 H26 L23.4 -2.2 Z" fill="#8ccaf8"/>
<path d="M22.2 -1.6 L25.6 -5.6 L27.2 -4.2 L24 -0.4 Z" fill="#f4f4f4" stroke="#555" stroke-width="0.7"/>
<path d="M24.6 -6.4 L27.8 -3.6" stroke="#555" stroke-width="1"/>
</g>
<g transform="translate(0 404.02)">
<rect x="5.2" y="-3.4" width="6.8" height="6.8" fill="#f8f8f8"/>
<path d="M6 0 H11.2 M8.6 -2.6 V2.6" stroke="#888" stroke-width="0.9"/>
<path d="M12 0 H15" stroke="#b8b8b8" stroke-width="1" stroke-dasharray="1 1"/>
<path d="M16.2 -2.2 L18.8 -4.8 H26 V2.8 L23.4 5.4 H16.2 Z" fill="#3489d6"/>
<path d="M16.2 -2.2 H23.4 V5.4 H16.2 Z" fill="#48a2ee"/>
<path d="M16.2 -2.2 L18.8 -4.8 H26 L23.4 -2.2 Z" fill="#8ccaf8"/>
<path d="M22.2 -1.6 L25.6 -5.6 L27.2 -4.2 L24 -0.4 Z" fill="#f4f4f4" stroke="#555" stroke-width="0.7"/>
<path d="M24.6 -6.4 L27.8 -3.6" stroke="#555" stroke-width="1"/>
</g>
<g transform="translate(0 418.58)">
<rect x="5.2" y="-3.4" width="6.8" height="6.8" fill="#f8f8f8"/>
<path d="M6 0 H11.2 M8.6 -2.6 V2.6" stroke="#888" stroke-width="0.9"/>
<path d="M12 0 H15" stroke="#b8b8b8" stroke-width="1" stroke-dasharray="1 1"/>
<path d="M16.2 -2.2 L18.8 -4.8 H26 V2.8 L23.4 5.4 H16.2 Z" fill="#3489d6"/>
<path d="M16.2 -2.2 H23.4 V5.4 H16.2 Z" fill="#48a2ee"/>
<path d="M16.2 -2.2 L18.8 -4.8 H26 L23.4 -2.2 Z" fill="#8ccaf8"/>
<path d="M22.2 -1.6 L25.6 -5.6 L27.2 -4.2 L24 -0.4 Z" fill="#f4f4f4" stroke="#555" stroke-width="0.7"/>
<path d="M24.6 -6.4 L27.8 -3.6" stroke="#555" stroke-width="1"/>
</g>
<g transform="translate(0 433.14)">
<rect x="5.2" y="-3.4" width="6.8" height="6.8" fill="#f8f8f8"/>
<path d="M6 0 H11.2 M8.6 -2.6 V2.6" stroke="#888" stroke-width="0.9"/>
<path d="M12 0 H15" stroke="#b8b8b8" stroke-width="1" stroke-dasharray="1 1"/>
<path d="M16.2 -2.2 L18.8 -4.8 H26 V2.8 L23.4 5.4 H16.2 Z" fill="#3489d6"/>
<path d="M16.2 -2.2 H23.4 V5.4 H16.2 Z" fill="#48a2ee"/>
<path d="M16.2 -2.2 L18.8 -4.8 H26 L23.4 -2.2 Z" fill="#8ccaf8"/>
<path d="M22.2 -1.6 L25.6 -5.6 L27.2 -4.2 L24 -0.4 Z" fill="#f4f4f4" stroke="#555" stroke-width="0.7"/>
<path d="M24.6 -6.4 L27.8 -3.6" stroke="#555" stroke-width="1"/>
</g>
<g transform="translate(0 447.70)">
<rect x="5.2" y="-3.4" width="6.8" height="6.8" fill="#f8f8f8"/>
<path d="M6 0 H11.2 M8.6 -2.6 V2.6" stroke="#888" stroke-width="0.9"/>
<path d="M12 0 H15" stroke="#b8b8b8" stroke-width="1" stroke-dasharray="1 1"/>
<path d="M16.2 -2.2 L18.8 -4.8 H26 V2.8 L23.4 5.4 H16.2 Z" fill="#3489d6"/>
<path d="M16.2 -2.2 H23.4 V5.4 H16.2 Z" fill="#48a2ee"/>
<path d="M16.2 -2.2 L18.8 -4.8 H26 L23.4 -2.2 Z" fill="#8ccaf8"/>
<path d="M22.2 -1.6 L25.6 -5.6 L27.2 -4.2 L24 -0.4 Z" fill="#f4f4f4" stroke="#555" stroke-width="0.7"/>
<path d="M24.6 -6.4 L27.8 -3.6" stroke="#555" stroke-width="1"/>
</g>
<g transform="translate(0 462.26)">
<rect x="5.2" y="-3.4" width="6.8" height="6.8" fill="#f8f8f8"/>
<path d="M6 0 H11.2 M8.6 -2.6 V2.6" stroke="#888" stroke-width="0.9"/>
<path d="M12 0 H15" stroke="#b8b8b8" stroke-width="1" stroke-dasharray="1 1"/>
<path d="M16.2 -2.2 L18.8 -4.8 H26 V2.8 L23.4 5.4 H16.2 Z" fill="#3489d6"/>
<path d="M16.2 -2.2 H23.4 V5.4 H16.2 Z" fill="#48a2ee"/>
<path d="M16.2 -2.2 L18.8 -4.8 H26 L23.4 -2.2 Z" fill="#8ccaf8"/>
<path d="M22.2 -1.6 L25.6 -5.6 L27.2 -4.2 L24 -0.4 Z" fill="#f4f4f4" stroke="#555" stroke-width="0.7"/>
<path d="M24.6 -6.4 L27.8 -3.6" stroke="#555" stroke-width="1"/>
</g>
<g transform="translate(0 476.82)">
<rect x="5.2" y="-3.4" width="6.8" height="6.8" fill="#f8f8f8"/>
<path d="M6 0 H11.2 M8.6 -2.6 V2.6" stroke="#888" stroke-width="0.9"/>
<path d="M12 0 H15" stroke="#b8b8b8" stroke-width="1" stroke-dasharray="1 1"/>
<path d="M16.2 -2.2 L18.8 -4.8 H26 V2.8 L23.4 5.4 H16.2 Z" fill="#3489d6"/>
<path d="M16.2 -2.2 H23.4 V5.4 H16.2 Z" fill="#48a2ee"/>
<path d="M16.2 -2.2 L18.8 -4.8 H26 L23.4 -2.2 Z" fill="#8ccaf8"/>
<path d="M22.2 -1.6 L25.6 -5.6 L27.2 -4.2 L24 -0.4 Z" fill="#f4f4f4" stroke="#555" stroke-width="0.7"/>
<path d="M24.6 -6.4 L27.8 -3.6" stroke="#555" stroke-width="1"/>
</g>
<g transform="translate(0 491.38)">
<rect x="5.2" y="-3.4" width="6.8" height="6.8" fill="#f8f8f8"/>
<path d="M6 0 H11.2 M8.6 -2.6 V2.6" stroke="#888" stroke-width="0.9"/>
<path d="M12 0 H15" stroke="#b8b8b8" stroke-width="1" stroke-dasharray="1 1"/>
<path d="M16.2 -2.2 L18.8 -4.8 H26 V2.8 L23.4 5.4 H16.2 Z" fill="#3489d6"/>
<path d="M16.2 -2.2 H23.4 V5.4 H16.2 Z" fill="#48a2ee"/>
<path d="M16.2 -2.2 L18.8 -4.8 H26 L23.4 -2.2 Z" fill="#8ccaf8"/>
<path d="M22.2 -1.6 L25.6 -5.6 L27.2 -4.2 L24 -0.4 Z" fill="#f4f4f4" stroke="#555" stroke-width="0.7"/>
<path d="M24.6 -6.4 L27.8 -3.6" stroke="#555" stroke-width="1"/>
</g>
<g transform="translate(0 505.94)">
<rect x="5.2" y="-3.4" width="6.8" height="6.8" fill="#f8f8f8"/>
<path d="M6 0 H11.2 M8.6 -2.6 V2.6" stroke="#888" stroke-width="0.9"/>
<path d="M12 0 H15" stroke="#b8b8b8" stroke-width="1" stroke-dasharray="1 1"/>
<ellipse cx="19" cy="2.6" rx="2.6" ry="2" fill="none" stroke="#777" stroke-width="0.8"/>
<ellipse cx="23.4" cy="3.2" rx="2.8" ry="1.8" fill="none" stroke="#777" stroke-width="0.8"/>
<path d="M20.2 -3.4 L21.8 -5.2 H26.2 V-0.4 L24.6 1.2 H20.2 Z" fill="#3489d6"/>
<path d="M20.2 -3.4 H24.6 V1.2 H20.2 Z" fill="#48a2ee"/>
<path d="M20.2 -3.4 L21.8 -5.2 H26.2 L24.6 -3.4 Z" fill="#8ccaf8"/>
</g>
<g transform="translate(0 520.50)">
<rect x="5.2" y="-3.4" width="6.8" height="6.8" fill="#f8f8f8"/>
<path d="M6 0 H11.2 M8.6 -2.6 V2.6" stroke="#888" stroke-width="0.9"/>
<path d="M12 0 H15" stroke="#b8b8b8" stroke-width="1" stroke-dasharray="1 1"/>
<path d="M17.2 -0.6 H26.6 V4.2 H17.2 Z M22 -2.6 H26.6 V-0.6 M22 -2.6 V4.2" fill="#f8f8f8" stroke="#555" stroke-width="0.9"/>
<rect x="17.2" y="-5.6" width="5" height="5.6" fill="#409ce8"/>
</g>
</svg>
<div id="doctabs" class="a"></div>
<div class="a" style="left:180.8px;top:521px;width:100.2px;height:18px;background:#f2f2f2"></div>
<div class="a" style="left:180.8px;top:536.2px;width:100.2px;height:2.5px;background:#2b95d8"></div>
<div id="status" class="a"></div>
<div class="a" style="left:0;top:539px;width:1.8px;height:15px;background:#d4d4d4"></div>
<svg style="left:0;top:0" width="750" height="554" viewBox="0 0 750 554">
<defs>
<filter id="cubeblur" x="-30%" y="-30%" width="160%" height="160%"><feGaussianBlur stdDeviation="3"/></filter>
</defs>
<!-- top-right icons -->
<rect x="724.4" y="111.4" width="7.6" height="6.8" fill="none" stroke="#333" stroke-width="1"/>
<path d="M728.2 111.4 V118.2 M728.2 114.8 H732" stroke="#333" stroke-width="0.9"/>
<path d="M739.8 111.6 L746.4 118.2 M746.4 111.6 L739.8 118.2" stroke="#333" stroke-width="1.1"/>
<!-- cursor -->
<path d="M393 118 V129.6 L395.8 127 L397.8 131.6 L399.6 130.8 L397.6 126.4 L401.4 126.2 Z" fill="#fff" stroke="#222" stroke-width="0.9" stroke-linejoin="round"/>
<!-- view cube -->
<path d="M700 172 L712 190 L738 176 L736 160 Z" fill="#cfcfcf" filter="url(#cubeblur)" opacity="0.8"/>
<path d="M714.2 137.5 L734.6 151.4 L732.3 171.3 L710 183.4 L695 167.7 L693.5 145 Z" fill="#f4f4f4"/>
<path d="M714.2 137.5 L734.6 151.4 L711 162.3 L693.5 145 Z" fill="#f8f8f8"/>
<path d="M693.5 145 L711 162.3 L710 183.4 L695 167.7 Z" fill="#f1f1f1"/>
<path d="M711 162.3 L734.6 151.4 L732.3 171.3 L710 183.4 Z" fill="#ececec"/>
<path d="M714.2 137.5 L734.6 151.4 L732.3 171.3 L710 183.4 L695 167.7 L693.5 145 Z M693.5 145 L711 162.3 L734.6 151.4 M711 162.3 L710 183.4" fill="none" stroke="#8a8a8a" stroke-width="0.9" stroke-dasharray="3 1.6"/>
<text transform="translate(718.6 148) rotate(193) skewX(-20)" font-size="4.6" fill="#8a8a8a" font-family="Liberation Sans, sans-serif">TOP</text>
<text transform="translate(696.8 158.4) rotate(46) skewX(8)" font-size="4.4" fill="#8a8a8a" font-family="Liberation Sans, sans-serif">RIGHT</text>
<text transform="translate(716.4 172.4) rotate(-27) skewX(-8)" font-size="4.6" fill="#8a8a8a" font-family="Liberation Sans, sans-serif">BACK</text>
<!-- nav bar -->
<rect x="722.6" y="194.6" width="25" height="167.4" rx="2.4" fill="#f3f3f3" stroke="#bdbdbd" stroke-width="1.2"/>
<circle cx="742" cy="200" r="2" fill="#e6e6e6" stroke="#aaa" stroke-width="0.8"/>
<circle cx="742" cy="356.6" r="2" fill="#e6e6e6" stroke="#aaa" stroke-width="0.8"/>
<path d="M735.2 211 A7.8 7.8 0 1 0 743 218.8 V212.6 Q743 211 741.4 211 Z" fill="#ededed" stroke="#8a8a8a" stroke-width="1"/>
<circle cx="735.2" cy="218.8" r="4.6" fill="#f6f6f6" stroke="#8a8a8a" stroke-width="1"/>
<path d="M733.4 234 H737 L735.2 236 Z" fill="#666"/>
<path d="M725 239.6 H745.4" stroke="#c4c4c4" stroke-width="1"/>
<!-- hand -->
<path d="M730.4 260.4 L727.4 255.4 Q727 253.8 728.8 254.4 L730.8 256.4 L730.4 248.6 Q731.4 247 732.4 248.6 L733 253 L733.4 246.6 Q734.6 245.2 735.6 246.8 L735.8 253 L737 247.2 Q738.2 246 739 247.6 L738.6 253.6 L740.2 249.6 Q741.6 248.8 741.8 250.6 L740.6 257 Q740 260.6 737.4 261.6 H733 Q731.4 261.6 730.4 260.4 Z" fill="#f6f6f6" stroke="#777" stroke-width="0.9" stroke-linejoin="round"/>
<!-- zoom -->
<path d="M727.6 271.4 H735.6 M731.6 267.4 V275.4 M727.6 278.6 H735.6" stroke="#777" stroke-width="1.4"/>
<circle cx="738.6" cy="279" r="3" fill="#f8f8f8" stroke="#777" stroke-width="0.9"/>
<path d="M740.8 281.2 L743.4 284" stroke="#777" stroke-width="1.4"/>
<path d="M733.4 290.4 H737 L735.2 292.4 Z" fill="#666"/>
<!-- orbit -->
<ellipse cx="735.4" cy="307" rx="7.6" ry="3.6" fill="none" stroke="#777" stroke-width="0.9"/>
<ellipse cx="735.4" cy="307" rx="3.2" ry="7.8" fill="none" stroke="#777" stroke-width="0.9"/>
<path d="M735.4 304 L738.6 303.4 M737 301.8 L738.8 303.4 L737.2 305 M735 309 H738 M733.2 307.6 L735 309 L733.4 310.4" stroke="#666" stroke-width="0.8" fill="none"/>
<path d="M733.4 321.4 H737 L735.2 323.4 Z" fill="#666"/>
<!-- look at -->
<path d="M728.6 334 L733 329.6 L736 332.4 L738.4 330.6 V334" fill="#f3f3f3" stroke="#888" stroke-width="0.9"/>
<rect x="728" y="334" width="14.6" height="10.6" fill="#ededed" stroke="#888" stroke-width="0.9"/>
<rect x="730.6" y="337" width="9.4" height="4.6" fill="#bcc3cc"/>
<!-- window right border -->
<path d="M749.5 107 V521" stroke="#cdcdcd" stroke-width="1"/>
<!-- doc tabs icons -->
<path d="M164.4 528.2 L169.4 523.2 L174.4 528.2" fill="none" stroke="#444" stroke-width="1.1"/>
<path d="M165.8 527.2 V533.2 H173 V527.2" fill="#fafafa" stroke="#444" stroke-width="1"/>
<rect x="168.2" y="529.4" width="2.4" height="3.8" fill="none" stroke="#444" stroke-width="0.8"/>
<path d="M266.2 525.2 L271.6 530.6 M271.6 525.2 L266.2 530.6" stroke="#333" stroke-width="1"/>
<path d="M735.2 526 H745 M735.2 529.7 H745 M735.2 533.3 H745" stroke="#444" stroke-width="1.1"/>
<path d="M741 552.6 L748.6 545 M744 552.6 L748.6 548 M747 552.6 L748.6 551" stroke="#c4c4c4" stroke-width="0.8" stroke-dasharray="1 1"/>
</svg>

<div class="a" style="left:676.8px;top:540px;width:1px;height:13px;background:#d8d8d8"></div>
<div class="a" style="left:705.8px;top:540px;width:1px;height:13px;background:#d8d8d8"></div>
<div class="a" style="left:734.2px;top:540px;width:1px;height:13px;background:#d8d8d8"></div>
<span class="t" style="left:244.60px;top:7.62px;font-size:8.60px;color:#8a8a8a;letter-spacing:-0.096px;font-style:italic;">Appearance</span>
<span class="t" style="left:357.60px;top:7.22px;font-size:8.60px;color:#2c2c2c;letter-spacing:-0.097px;">@ClintBrown3D</span>
<span class="t" style="left:427.60px;top:7.22px;font-size:8.60px;color:#2c2c2c;letter-spacing:0.059px;">Clint's guitar20.iam</span>
<span class="t" style="left:543.60px;top:7.42px;font-size:8.60px;color:#2c2c2c;letter-spacing:-0.109px;">Sign In</span>
<span class="t" style="left:11.60px;top:25.72px;font-size:8.60px;color:#ffffff;letter-spacing:-0.115px;">File</span>
<span class="t" style="left:43.60px;top:25.72px;font-size:8.60px;color:#222;letter-spacing:-0.167px;">Assemble</span>
<span class="t" style="left:95.00px;top:25.72px;font-size:8.60px;color:#4a4a4a;letter-spacing:-0.128px;">Design</span>
<span class="t" style="left:136.00px;top:25.72px;font-size:8.60px;color:#4a4a4a;letter-spacing:0.074px;">Annotate</span>
<span class="t" style="left:186.60px;top:25.72px;font-size:8.60px;color:#4a4a4a;letter-spacing:-0.048px;">3D Model</span>
<span class="t" style="left:238.00px;top:25.72px;font-size:8.60px;color:#4a4a4a;letter-spacing:-0.214px;">Sketch</span>
<span class="t" style="left:278.00px;top:25.72px;font-size:8.60px;color:#4a4a4a;letter-spacing:-0.017px;">Inspect</span>
<span class="t" style="left:321.00px;top:25.72px;font-size:8.60px;color:#4a4a4a;letter-spacing:-0.133px;">Tools</span>
<span class="t" style="left:355.60px;top:25.72px;font-size:8.60px;color:#4a4a4a;letter-spacing:-0.044px;">Manage</span>
<span class="t" style="left:401.60px;top:25.72px;font-size:8.60px;color:#4a4a4a;letter-spacing:-0.121px;">View</span>
<span class="t" style="left:434.40px;top:25.72px;font-size:8.60px;color:#4a4a4a;letter-spacing:0.004px;">Environments</span>
<span class="t" style="left:502.40px;top:25.72px;font-size:8.60px;color:#4a4a4a;letter-spacing:-0.214px;">Get Started</span>
<span class="t" style="left:559.00px;top:25.72px;font-size:8.60px;color:#4a4a4a;letter-spacing:0.139px;">Add-Ins</span>
<span class="t" style="left:604.40px;top:25.72px;font-size:8.60px;color:#4a4a4a;letter-spacing:-0.013px;">Electromechanical</span>
<span class="t" style="left:12.00px;top:68.89px;font-size:8.40px;color:#3a3a3a;letter-spacing:-0.191px;">Place</span>
<span class="t" style="left:43.00px;top:68.89px;font-size:8.40px;color:#3a3a3a;letter-spacing:-0.190px;">Create</span>
<span class="t" style="left:92.40px;top:43.89px;font-size:8.40px;color:#3a3a3a;letter-spacing:-0.048px;">Free Move</span>
<span class="t" style="left:145.00px;top:68.89px;font-size:8.40px;color:#3a3a3a;letter-spacing:-0.141px;">Joint</span>
<span class="t" style="left:170.00px;top:68.89px;font-size:8.40px;color:#3a3a3a;letter-spacing:0.017px;">Constrain</span>
<span class="t" style="left:275.60px;top:68.89px;font-size:8.40px;color:#3a3a3a;letter-spacing:0.131px;">Bill of</span>
<span class="t" style="left:269.00px;top:80.09px;font-size:8.40px;color:#3a3a3a;letter-spacing:0.068px;">Materials</span>
<span class="t" style="left:308.00px;top:68.89px;font-size:8.40px;color:#3a3a3a;letter-spacing:-0.030px;">Parameters</span>
<span class="t" style="left:365.00px;top:68.89px;font-size:8.40px;color:#3a3a3a;letter-spacing:-0.023px;">Create Derived</span>
<span class="t" style="left:372.00px;top:80.09px;font-size:8.40px;color:#3a3a3a;letter-spacing:0.051px;">Substitutes</span>
<span class="t" style="left:441.00px;top:68.89px;font-size:8.40px;color:#3a3a3a;letter-spacing:-0.084px;">Plane</span>
<span class="t" style="left:503.00px;top:68.89px;font-size:8.40px;color:#3a3a3a;letter-spacing:0.069px;">Shrinkwrap</span>
<span class="t" style="left:550.40px;top:68.89px;font-size:8.40px;color:#3a3a3a;letter-spacing:0.069px;">Shrinkwrap</span>
<span class="t" style="left:552.40px;top:80.09px;font-size:8.40px;color:#3a3a3a;letter-spacing:0.135px;">Substitute</span>
<span class="t" style="left:607.00px;top:68.89px;font-size:8.40px;color:#3a3a3a;letter-spacing:-0.085px;">Measure</span>
<span class="t" style="left:9.00px;top:94.99px;font-size:8.40px;color:#3a3a3a;letter-spacing:0.188px;">Component</span>
<span class="t" style="left:84.00px;top:94.99px;font-size:8.40px;color:#3a3a3a;letter-spacing:0.150px;">Position</span>
<span class="t" style="left:153.00px;top:94.99px;font-size:8.40px;color:#3a3a3a;letter-spacing:-0.022px;">Relationships</span>
<span class="t" style="left:233.00px;top:94.99px;font-size:8.40px;color:#3a3a3a;letter-spacing:-0.002px;">Pattern</span>
<span class="t" style="left:289.60px;top:94.99px;font-size:8.40px;color:#3a3a3a;letter-spacing:0.022px;">Manage</span>
<span class="t" style="left:370.00px;top:94.99px;font-size:8.40px;color:#3a3a3a;letter-spacing:0.225px;">Productivity</span>
<span class="t" style="left:437.60px;top:94.99px;font-size:8.40px;color:#3a3a3a;letter-spacing:-0.059px;">Work Features</span>
<span class="t" style="left:516.00px;top:94.99px;font-size:8.40px;color:#3a3a3a;letter-spacing:0.261px;">Simplification</span>
<span class="t" style="left:601.60px;top:94.99px;font-size:8.40px;color:#3a3a3a;letter-spacing:-0.028px;">Measure</span>
<span class="t" style="left:682.40px;top:94.99px;font-size:8.40px;color:#3a3a3a;letter-spacing:0.058px;">User Commands</span>
<span class="t" style="left:4.80px;top:109.89px;font-size:8.40px;color:#2a2a2a;letter-spacing:-0.463px;">Model</span>
<span class="t" style="left:46.60px;top:109.89px;font-size:8.40px;color:#8c8c8c;letter-spacing:-0.415px;">iLogic</span>
<span class="t" style="left:8.80px;top:131.36px;font-size:8.20px;color:#2a8ad0;letter-spacing:-0.450px;">Assembly</span>
<span class="t" style="left:54.60px;top:131.36px;font-size:8.20px;color:#333;letter-spacing:-0.392px;">Modeling</span>
<span class="t" style="left:29.70px;top:151.93px;font-size:8.00px;color:#222;letter-spacing:0.021px;">String guide.ipt:43</span>
<span class="t" style="left:29.70px;top:166.49px;font-size:8.00px;color:#222;letter-spacing:-0.141px;">Machine Head assembly.iam:44</span>
<span class="t" style="left:29.70px;top:181.05px;font-size:8.00px;color:#222;letter-spacing:-0.141px;">Machine Head assembly.iam:45</span>
<span class="t" style="left:29.70px;top:195.61px;font-size:8.00px;color:#222;letter-spacing:-0.141px;">Machine Head assembly.iam:46</span>
<span class="t" style="left:29.70px;top:210.17px;font-size:8.00px;color:#222;letter-spacing:0.021px;">String guide.ipt:47</span>
<span class="t" style="left:29.70px;top:224.73px;font-size:8.00px;color:#222;letter-spacing:0.021px;">String guide.ipt:48</span>
<span class="t" style="left:29.70px;top:239.29px;font-size:8.00px;color:#222;letter-spacing:0.021px;">String guide.ipt:49</span>
<span class="t" style="left:29.70px;top:253.85px;font-size:8.00px;color:#222;letter-spacing:-0.044px;">Machine Head Washer.ipt:53</span>
<span class="t" style="left:29.70px;top:268.41px;font-size:8.00px;color:#222;letter-spacing:-0.055px;">Machine Head Nut.ipt:54</span>
<span class="t" style="left:29.70px;top:282.97px;font-size:8.00px;color:#222;letter-spacing:-0.044px;">Machine Head Washer.ipt:55</span>
<span class="t" style="left:29.70px;top:297.53px;font-size:8.00px;color:#222;letter-spacing:-0.055px;">Machine Head Nut.ipt:56</span>
<span class="t" style="left:29.70px;top:312.09px;font-size:8.00px;color:#222;letter-spacing:-0.044px;">Machine Head Washer.ipt:57</span>
<span class="t" style="left:29.70px;top:326.65px;font-size:8.00px;color:#222;letter-spacing:-0.055px;">Machine Head Nut.ipt:58</span>
<span class="t" style="left:29.70px;top:341.21px;font-size:8.00px;color:#222;letter-spacing:-0.044px;">Machine Head Washer.ipt:59</span>
<span class="t" style="left:29.70px;top:355.77px;font-size:8.00px;color:#222;letter-spacing:-0.055px;">Machine Head Nut.ipt:60</span>
<span class="t" style="left:29.70px;top:370.33px;font-size:8.00px;color:#222;letter-spacing:-0.044px;">Machine Head Washer.ipt:61</span>
<span class="t" style="left:29.70px;top:384.89px;font-size:8.00px;color:#222;letter-spacing:-0.055px;">Machine Head Nut.ipt:62</span>
<span class="t" style="left:29.70px;top:399.45px;font-size:8.00px;color:#222;letter-spacing:-0.044px;">Machine Head Washer.ipt:63</span>
<span class="t" style="left:29.70px;top:414.01px;font-size:8.00px;color:#222;letter-spacing:-0.055px;">Machine Head Nut.ipt:64</span>
<span class="t" style="left:29.70px;top:428.57px;font-size:8.00px;color:#222;letter-spacing:0.048px;">backplate01.ipt:65</span>
<span class="t" style="left:29.70px;top:443.13px;font-size:8.00px;color:#222;letter-spacing:0.010px;">screw backplate01.ipt:66</span>
<span class="t" style="left:29.70px;top:457.69px;font-size:8.00px;color:#222;letter-spacing:0.010px;">screw backplate01.ipt:67</span>
<span class="t" style="left:29.70px;top:472.25px;font-size:8.00px;color:#222;letter-spacing:0.010px;">screw backplate01.ipt:68</span>
<span class="t" style="left:29.70px;top:486.81px;font-size:8.00px;color:#222;letter-spacing:0.010px;">screw backplate01.ipt:69</span>
<span class="t" style="left:29.70px;top:501.37px;font-size:8.00px;color:#222;letter-spacing:-0.055px;">Neck Assembly.ipt:70</span>
<span class="t" style="left:29.70px;top:515.93px;font-size:8.00px;color:#222;letter-spacing:-0.077px;">Electronics + Pickguard20:1</span>
<span class="t" style="left:187.00px;top:524.29px;font-size:8.40px;color:#2488d2;letter-spacing:0.102px;">Clint's guitar20.iam</span>
<span class="t" style="left:3.60px;top:542.29px;font-size:8.40px;color:#333;letter-spacing:-0.424px;">Ready</span>
<span class="t" style="left:684.70px;top:542.55px;font-size:8.80px;color:#2a2a2a;letter-spacing:-0.629px;">209</span>
<span class="t" style="left:712.20px;top:542.55px;font-size:8.80px;color:#2a2a2a;letter-spacing:-0.648px;">82</span>
</body></html>
